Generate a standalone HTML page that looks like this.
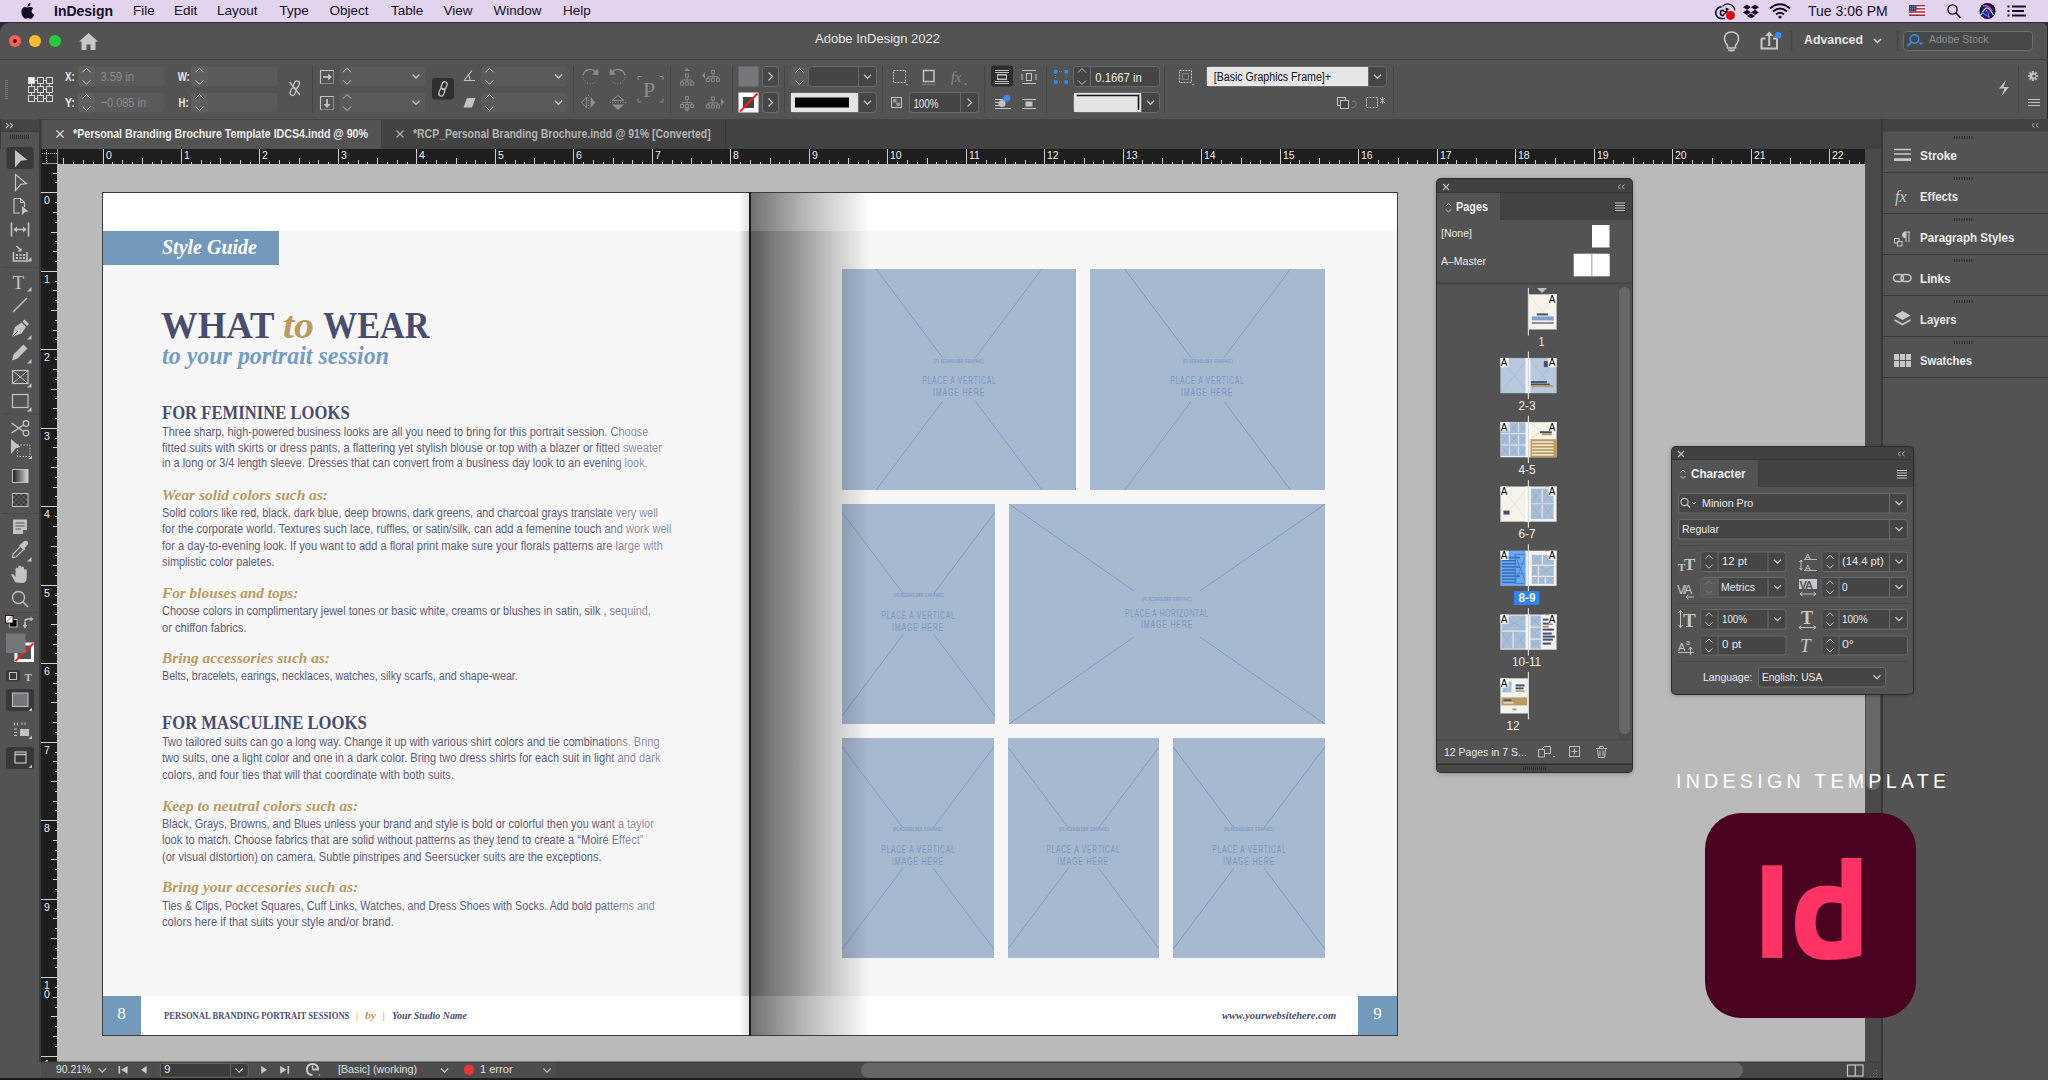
<!DOCTYPE html><html><head><meta charset="utf-8"><style>
*{margin:0;padding:0;box-sizing:border-box}
html,body{width:2048px;height:1080px;overflow:hidden;background:#bababa}
body{position:relative;font-family:"Liberation Sans",sans-serif}
div,svg{position:absolute}
.t{white-space:nowrap;line-height:1}
.ui{color:#e6e6e6;font-size:12px}
.serif{font-family:"Liberation Serif",serif}
</style></head><body><div style="left:0px;top:0px;width:2048px;height:1080px;background:#bababa"></div>
<div style="left:0px;top:0px;width:2048px;height:22px;background:#e1d4ec"></div>
<div style="left:0px;top:22px;width:2048px;height:1px;background:#3b2f4a"></div>
<svg style="left:20px;top:3px" width="14" height="16" viewBox="0 0 14 16"><path fill="#160d28" d="M11.6 8.5c0-2 1.6-2.9 1.7-3-0.9-1.4-2.3-1.5-2.8-1.6-1.2-0.1-2.3 0.7-2.9 0.7-0.6 0-1.5-0.7-2.5-0.7C3.8 4 2.6 4.7 2 5.9 0.6 8.3 1.6 11.8 3 13.8c0.7 1 1.5 2.1 2.5 2 1-0.04 1.4-0.6 2.6-0.6 1.2 0 1.5 0.6 2.6 0.6 1.1 0 1.8-1 2.4-2 0.8-1.1 1.1-2.2 1.1-2.3-0.03 0-2.6-1-2.6-3zM9.7 2.6c0.5-0.7 0.9-1.6 0.8-2.5-0.8 0-1.7 0.5-2.3 1.2-0.5 0.6-0.9 1.5-0.8 2.4 0.9 0.1 1.7-0.4 2.300-1.1z"/></svg>
<div class="t" style="left:54px;top:4px;color:#160d28;font-size:13.5px;font-weight:bold;font-size:14px">InDesign</div>
<div class="t" style="left:133px;top:4px;color:#160d28;font-size:13.5px;">File</div>
<div class="t" style="left:174px;top:4px;color:#160d28;font-size:13.5px;">Edit</div>
<div class="t" style="left:217px;top:4px;color:#160d28;font-size:13.5px;">Layout</div>
<div class="t" style="left:279.5px;top:4px;color:#160d28;font-size:13.5px;">Type</div>
<div class="t" style="left:329.5px;top:4px;color:#160d28;font-size:13.5px;">Object</div>
<div class="t" style="left:391px;top:4px;color:#160d28;font-size:13.5px;">Table</div>
<div class="t" style="left:443.5px;top:4px;color:#160d28;font-size:13.5px;">View</div>
<div class="t" style="left:493.5px;top:4px;color:#160d28;font-size:13.5px;">Window</div>
<div class="t" style="left:563px;top:4px;color:#160d28;font-size:13.5px;">Help</div>
<div class="t" style="left:1808px;top:4px;color:#160d28;font-size:13.5px;font-size:14px">Tue 3:06 PM</div>
<div style="left:0px;top:22px;width:2048px;height:14px;background:#2f2640"></div>
<div style="left:0px;top:23px;width:2047px;height:1057px;background:#535353;border-radius:9px 5px 0 0"></div>
<div style="left:2047px;top:30px;width:1px;height:1050px;background:#2a2a2a"></div>
<div style="left:0px;top:59px;width:2048px;height:1px;background:#3d3d3d"></div>
<div style="left:57px;top:164px;width:1808px;height:898px;background:#bababa"></div>
<div style="left:9px;top:35px;width:12px;height:12px;background:#fe5f57;border-radius:50%"></div>
<div style="left:29px;top:35px;width:12px;height:12px;background:#febc2e;border-radius:50%"></div>
<div style="left:49px;top:35px;width:12px;height:12px;background:#28c840;border-radius:50%"></div>
<div style="left:13px;top:39px;width:4px;height:4px;background:#4d0000;border-radius:50%"></div>
<svg style="left:79px;top:33px" width="19" height="17" viewBox="0 0 19 17"><path fill="#c8c8c8" d="M9.5 0L0 8.5h2.5V17h5v-5.5h4V17h5V8.5H19z"/></svg>
<div class="t" style="left:815px;top:32px;color:#e8e8e8;font-size:13px">Adobe InDesign 2022</div>
<div style="left:0px;top:119px;width:41px;height:12px;background:#424242"></div>
<div style="left:41px;top:119px;width:1840px;height:30px;background:#424242"></div>
<div style="left:42px;top:120px;width:339px;height:28.5px;background:#535353"></div>
<div style="left:724.5px;top:120px;width:1px;height:29px;background:#393939"></div>
<svg style="left:54px;top:128px" width="12" height="12"><path d="M2.5 2.5L9.5 9.5M9.5 2.5L2.5 9.5" stroke="#e0e0e0" stroke-width="1.3"/></svg>
<div class="t" style="left:73.00px;top:127.56px;font-family:'Liberation Sans',sans-serif;font-size:12.8px;color:#ececec;font-weight:bold;transform:scaleX(0.8308);transform-origin:left top;">*Personal Branding Brochure Template IDCS4.indd @ 90%</div>
<svg style="left:394px;top:128px" width="12" height="12"><path d="M2.5 2.5L9.5 9.5M9.5 2.5L2.5 9.5" stroke="#b0b0b0" stroke-width="1.3"/></svg>
<div class="t" style="left:413.20px;top:127.56px;font-family:'Liberation Sans',sans-serif;font-size:12.8px;color:#b4b4b4;font-weight:bold;transform:scaleX(0.8169);transform-origin:left top;">*RCP_Personal Branding Brochure.indd @ 91% [Converted]</div>
<svg style="left:1700px;top:22px" width="348" height="38"><path d="M31.5 26V17.5Q25 13.5 25 6.5Q25 -1 31.5 -1" transform="translate(0,10)" fill="none"/><path d="M27.5 23.5Q24.5 19.5 24.5 17Q24.5 10 31.5 10Q38.5 10 38.5 17Q38.5 19.5 35.5 23.5V26H27.5Z" fill="none" stroke="#c8c8c8" stroke-width="1.5"/><path d="M28 27.5H35V28.5Q34.5 29.5 31.5 29.5Q28.5 29.5 28 28.5Z" fill="#c8c8c8"/><path d="M61.5 16.5V26.5H77V16.5M65.5 16.5H61.5M77 16.5H73" fill="none" stroke="#c8c8c8" stroke-width="2"/><path d="M69.2 24V11" stroke="#c8c8c8" stroke-width="2"/><path d="M65 14L69.2 9.5L73.4 14Z" fill="#c8c8c8"/><circle cx="78.2" cy="13.3" r="3.3" fill="#3b8cf0"/><path d="M91.5 9V29" stroke="#444" stroke-width="1.5"/><path d="M174 17L177.5 20.5L181 17" fill="none" stroke="#d8d8d8" stroke-width="1.5"/><path d="M197.5 9V29" stroke="#444" stroke-width="1.5"/><rect x="203.5" y="9.5" width="129" height="19" rx="3" fill="#474747" stroke="#6e6e6e" stroke-width="1"/><circle cx="214.5" cy="17" r="4.3" fill="none" stroke="#3b8cf0" stroke-width="1.5"/><path d="M211.5 20L207.5 24" stroke="#3b8cf0" stroke-width="1.8"/><path d="M218.5 20.5H223.5L221 23Z" fill="#3b8cf0"/></svg>
<div class="t" style="left:1804.00px;top:33.47px;font-family:'Liberation Sans',sans-serif;font-size:13.5px;color:#e6e6e6;font-weight:bold;transform:scaleX(0.9144);transform-origin:left top;">Advanced</div>
<div class="t" style="left:1929.40px;top:34.36px;font-family:'Liberation Sans',sans-serif;font-size:11.5px;color:#8d8d8d;transform:scaleX(0.9124);transform-origin:left top;">Adobe Stock</div>
<svg style="left:1710px;top:0px" width="338" height="22"><path d="M15 18.5H11.5A5.8 5.8 0 0 1 11.5 6.9" fill="none" stroke="#160d28" stroke-width="1.7"/><path d="M17.5 10.5L13 15.5A2.6 2.6 0 1 1 13 10.3L15.5 12.5" fill="none" stroke="#160d28" stroke-width="1.6"/><path d="M12.5 6.5A7 7 0 0 1 24.8 10.5" fill="none" stroke="#160d28" stroke-width="1.2"/><path d="M15.5 7.5L19.5 9L16 11Z" fill="#160d28"/><circle cx="20.5" cy="15.4" r="4.5" fill="#d01010"/><path d="M37 4.5L33 7.2L37 9.8L41 7.2ZM45 4.5L41 7.2L45 9.8L49 7.2ZM33 12.4L37 15L41 12.4L37 9.8ZM45 9.8L41 12.4L45 15L49 12.4ZM37 16L41 18.6L45 16L41 13.4Z" fill="#160d28"/><path d="M60 8.5Q70 0 80 8.5" fill="none" stroke="#160d28" stroke-width="1.8"/><path d="M63 11.5Q70 5.5 77 11.5" fill="none" stroke="#160d28" stroke-width="1.8"/><path d="M66 14.5Q70 11 74 14.5" fill="none" stroke="#160d28" stroke-width="1.8"/><circle cx="70" cy="17" r="1.6" fill="#160d28"/><rect x="199" y="5.00" width="16" height="1.57" fill="#b22234"/><rect x="199" y="6.57" width="16" height="1.57" fill="#ffffff"/><rect x="199" y="8.14" width="16" height="1.57" fill="#b22234"/><rect x="199" y="9.71" width="16" height="1.57" fill="#ffffff"/><rect x="199" y="11.29" width="16" height="1.57" fill="#b22234"/><rect x="199" y="12.86" width="16" height="1.57" fill="#ffffff"/><rect x="199" y="14.43" width="16" height="1.57" fill="#b22234"/><rect x="199" y="5" width="7.5" height="6.3" fill="#3c3b6e"/><circle cx="200.5" cy="6.3" r="0.45" fill="#fff"/><circle cx="200.5" cy="8.2" r="0.45" fill="#fff"/><circle cx="200.5" cy="10.1" r="0.45" fill="#fff"/><circle cx="202.7" cy="6.3" r="0.45" fill="#fff"/><circle cx="202.7" cy="8.2" r="0.45" fill="#fff"/><circle cx="202.7" cy="10.1" r="0.45" fill="#fff"/><circle cx="204.9" cy="6.3" r="0.45" fill="#fff"/><circle cx="204.9" cy="8.2" r="0.45" fill="#fff"/><circle cx="204.9" cy="10.1" r="0.45" fill="#fff"/><circle cx="242.5" cy="9.5" r="4.6" fill="none" stroke="#160d28" stroke-width="1.4"/><path d="M245.8 12.8L250.5 17.8" stroke="#160d28" stroke-width="1.6"/><defs><radialGradient id="siri" cx="0.5" cy="0.5" r="0.5"><stop offset="0" stop-color="#3a2f7a"/><stop offset="0.8" stop-color="#1f1750"/><stop offset="1" stop-color="#140d30"/></radialGradient></defs><circle cx="277.5" cy="11" r="8" fill="url(#siri)"/><path d="M271 15Q275 7 277.5 8Q280 9 283.5 15" fill="none" stroke="#8fe8f0" stroke-width="1.3"/><path d="M273 6Q279 5 282 11" fill="none" stroke="#e040c8" stroke-width="1.5"/><path d="M272 12Q276 16 280 17" fill="none" stroke="#3a7af0" stroke-width="1.5"/><path d="M276 10Q279 13 279 18" fill="none" stroke="#c050e0" stroke-width="1"/><path d="M302 6.5H316M302 11H314M302 15.5H316" stroke="#160d28" stroke-width="1.8"/><rect x="297.5" y="5.5" width="2" height="2" fill="#160d28"/><rect x="297.5" y="10" width="2" height="2" fill="#160d28"/><rect x="297.5" y="14.5" width="2" height="2" fill="#160d28"/></svg>
<svg style="left:41px;top:149px" width="1824" height="15"><rect width="1824" height="15" fill="#1e1e1e"/><path d="M22.5 9V15M32.5 13V15M42.5 11V15M52.5 13V15M62.5 0V15M71.5 13V15M81.5 11V15M91.5 13V15M101.5 9V15M111.5 13V15M120.5 11V15M130.5 13V15M140.5 0V15M150.5 13V15M160.5 11V15M169.5 13V15M179.5 9V15M189.5 13V15M199.5 11V15M209.5 13V15M218.5 0V15M228.5 13V15M238.5 11V15M248.5 13V15M258.5 9V15M268.5 13V15M277.5 11V15M287.5 13V15M297.5 0V15M307.5 13V15M317.5 11V15M326.5 13V15M336.5 9V15M346.5 13V15M356.5 11V15M366.5 13V15M375.5 0V15M385.5 13V15M395.5 11V15M405.5 13V15M415.5 9V15M425.5 13V15M434.5 11V15M444.5 13V15M454.5 0V15M464.5 13V15M474.5 11V15M483.5 13V15M493.5 9V15M503.5 13V15M513.5 11V15M523.5 13V15M532.5 0V15M542.5 13V15M552.5 11V15M562.5 13V15M572.5 9V15M581.5 13V15M591.5 11V15M601.5 13V15M611.5 0V15M621.5 13V15M631.5 11V15M640.5 13V15M650.5 9V15M660.5 13V15M670.5 11V15M680.5 13V15M689.5 0V15M699.5 13V15M709.5 11V15M719.5 13V15M729.5 9V15M738.5 13V15M748.5 11V15M758.5 13V15M768.5 0V15M778.5 13V15M788.5 11V15M797.5 13V15M807.5 9V15M817.5 13V15M827.5 11V15M837.5 13V15M846.5 0V15M856.5 13V15M866.5 11V15M876.5 13V15M886.5 9V15M895.5 13V15M905.5 11V15M915.5 13V15M925.5 0V15M935.5 13V15M945.5 11V15M954.5 13V15M964.5 9V15M974.5 13V15M984.5 11V15M994.5 13V15M1003.5 0V15M1013.5 13V15M1023.5 11V15M1033.5 13V15M1043.5 9V15M1052.5 13V15M1062.5 11V15M1072.5 13V15M1082.5 0V15M1092.5 13V15M1101.5 11V15M1111.5 13V15M1121.5 9V15M1131.5 13V15M1141.5 11V15M1151.5 13V15M1160.5 0V15M1170.5 13V15M1180.5 11V15M1190.5 13V15M1200.5 9V15M1209.5 13V15M1219.5 11V15M1229.5 13V15M1239.5 0V15M1249.5 13V15M1258.5 11V15M1268.5 13V15M1278.5 9V15M1288.5 13V15M1298.5 11V15M1308.5 13V15M1317.5 0V15M1327.5 13V15M1337.5 11V15M1347.5 13V15M1357.5 9V15M1366.5 13V15M1376.5 11V15M1386.5 13V15M1396.5 0V15M1406.5 13V15M1415.5 11V15M1425.5 13V15M1435.5 9V15M1445.5 13V15M1455.5 11V15M1465.5 13V15M1474.5 0V15M1484.5 13V15M1494.5 11V15M1504.5 13V15M1514.5 9V15M1523.5 13V15M1533.5 11V15M1543.5 13V15M1553.5 0V15M1563.5 13V15M1572.5 11V15M1582.5 13V15M1592.5 9V15M1602.5 13V15M1612.5 11V15M1621.5 13V15M1631.5 0V15M1641.5 13V15M1651.5 11V15M1661.5 13V15M1671.5 9V15M1680.5 13V15M1690.5 11V15M1700.5 13V15M1710.5 0V15M1720.5 13V15M1729.5 11V15M1739.5 13V15M1749.5 9V15M1759.5 13V15M1769.5 11V15M1778.5 13V15M1788.5 0V15M1798.5 13V15M1808.5 11V15M1818.5 13V15" stroke="#cfcfcf" stroke-width="1"/><g fill="#ececec" font-family="Liberation Sans" font-size="10.5"><text x="65.0" y="10" >0</text><text x="143.0" y="10" >1</text><text x="221.0" y="10" >2</text><text x="300.0" y="10" >3</text><text x="378.0" y="10" >4</text><text x="457.0" y="10" >5</text><text x="535.0" y="10" >6</text><text x="614.0" y="10" >7</text><text x="692.0" y="10" >8</text><text x="771.0" y="10" >9</text><text x="849.0" y="10" >10</text><text x="928.0" y="10" >11</text><text x="1006.0" y="10" >12</text><text x="1085.0" y="10" >13</text><text x="1163.0" y="10" >14</text><text x="1242.0" y="10" >15</text><text x="1320.0" y="10" >16</text><text x="1399.0" y="10" >17</text><text x="1477.0" y="10" >18</text><text x="1556.0" y="10" >19</text><text x="1634.0" y="10" >20</text><text x="1713.0" y="10" >21</text><text x="1791.0" y="10" >22</text></g><path d="M5.5 1V15M1 4.5H16" stroke="#bdbdbd" stroke-dasharray="1 1"/><path d="M16.5 0V15M1 14.5H16" stroke="#9a9a9a" stroke-width="1"/></svg>
<svg style="left:41px;top:164px" width="16" height="898"><rect width="16" height="898" fill="#1e1e1e"/><path d="M12 9.5H16M14 18.5H16M0 28.5H16M14 38.5H16M12 48.5H16M14 58.5H16M10 68.5H16M14 77.5H16M12 87.5H16M14 97.5H16M0 107.5H16M14 117.5H16M12 126.5H16M14 136.5H16M10 146.5H16M14 156.5H16M12 166.5H16M14 175.5H16M0 185.5H16M14 195.5H16M12 205.5H16M14 215.5H16M10 225.5H16M14 234.5H16M12 244.5H16M14 254.5H16M0 264.5H16M14 274.5H16M12 283.5H16M14 293.5H16M10 303.5H16M14 313.5H16M12 323.5H16M14 332.5H16M0 342.5H16M14 352.5H16M12 362.5H16M14 372.5H16M10 382.5H16M14 391.5H16M12 401.5H16M14 411.5H16M0 421.5H16M14 431.5H16M12 440.5H16M14 450.5H16M10 460.5H16M14 470.5H16M12 480.5H16M14 489.5H16M0 499.5H16M14 509.5H16M12 519.5H16M14 529.5H16M10 538.5H16M14 548.5H16M12 558.5H16M14 568.5H16M0 578.5H16M14 588.5H16M12 597.5H16M14 607.5H16M10 617.5H16M14 627.5H16M12 637.5H16M14 646.5H16M0 656.5H16M14 666.5H16M12 676.5H16M14 686.5H16M10 695.5H16M14 705.5H16M12 715.5H16M14 725.5H16M0 735.5H16M14 745.5H16M12 754.5H16M14 764.5H16M10 774.5H16M14 784.5H16M12 794.5H16M14 803.5H16M0 813.5H16M14 823.5H16M12 833.5H16M14 843.5H16M10 852.5H16M14 862.5H16M12 872.5H16M14 882.5H16M0 892.5H16" stroke="#cfcfcf" stroke-width="1"/><g fill="#ececec" font-family="Liberation Sans" font-size="10.5"><text x="3" y="39.5">0</text><text x="3" y="118.5">1</text><text x="3" y="196.5">2</text><text x="3" y="275.5">3</text><text x="3" y="353.5">4</text><text x="3" y="432.5">5</text><text x="3" y="510.5">6</text><text x="3" y="589.5">7</text><text x="3" y="667.5">8</text><text x="3" y="746.5">9</text><text x="3" y="824.5">1</text><text x="3" y="833.5">0</text><text x="3" y="903.5">1</text><text x="3" y="912.5">1</text></g></svg>
<div style="left:0px;top:119px;width:39px;height:943px;background:#535353"></div>
<div style="left:39px;top:119px;width:2px;height:943px;background:#3a3a3a"></div>
<svg style="left:0;top:0" width="40" height="1080"><rect x="6.5" y="147" width="27" height="22" rx="3" fill="#383838"/><path d="M15 150L27.5 160L21 160.8L15 167.5Z" fill="#c3c3c3"/><path d="M15.5 174.5L26.5 183.5L20.8 184.3L15.5 190.5Z" fill="none" stroke="#c3c3c3" stroke-width="1.2"/><path d="M14 198.5H20.5L24.5 202.5V207M14 198.5V213H20" fill="none" stroke="#c3c3c3" stroke-width="1.2"/><path d="M20.5 198.5V202.5H24.5" fill="none" stroke="#c3c3c3" stroke-width="1"/><path d="M22 206L28.5 211.5L25 212L22 215Z" fill="#c3c3c3"/><path d="M11.5 222.5V236.5M28.5 222.5V236.5M14 229.5H26" stroke="#c3c3c3" stroke-width="1.6" fill="none"/><path d="M13.5 229.5L17 226.5V232.5ZM26.5 229.5L23 226.5V232.5Z" fill="#c3c3c3"/><path d="M13.5 252V261H27V252" fill="none" stroke="#c3c3c3" stroke-width="1.6"/><path d="M16.5 246L20.5 250" stroke="#c3c3c3" stroke-width="1.4"/><path d="M21.5 247.5V251.5H17.5Z" fill="#c3c3c3"/><rect x="16" y="254" width="2" height="2" fill="#c3c3c3"/><rect x="19.5" y="254" width="2" height="2" fill="#c3c3c3"/><rect x="23" y="254" width="2" height="2" fill="#c3c3c3"/><rect x="16" y="257" width="2" height="2" fill="#c3c3c3"/><rect x="19.5" y="257" width="2" height="2" fill="#c3c3c3"/><rect x="23" y="257" width="2" height="2" fill="#c3c3c3"/><path d="M29 259.5L31.5 257V261.5H27Z" fill="#c3c3c3"/><path d="M2 267.5H38M2 414H38M2 513.5H38M2 612.5H38" stroke="#4a4a4a" stroke-width="1"/><text x="12.5" y="288.5" font-family="Liberation Serif" font-size="19" fill="#c3c3c3">T</text><path d="M29 289.5L31.5 287V291.5H27Z" fill="#c3c3c3"/><path d="M13 312L27 298" stroke="#c3c3c3" stroke-width="1.5"/><path d="M12 337L15 327L21.5 322.5L26 327L21.5 333.5Z" fill="#c3c3c3"/><path d="M22.5 321.5L24.5 319.5L29 324L27 326Z" fill="#c3c3c3"/><path d="M12.5 336.5L18 331" stroke="#535353" stroke-width="1"/><path d="M29 337.5L31.5 335V339.5H27Z" fill="#c3c3c3"/><path d="M12 360.5L13.5 354.5L23.5 344.5L27.5 348.5L17.5 358.5Z" fill="#c3c3c3"/><path d="M29 361.5L31.5 359V363.5H27Z" fill="#c3c3c3"/><rect x="12.5" y="370.5" width="15.5" height="13" fill="none" stroke="#c3c3c3" stroke-width="1.2"/><path d="M12.5 370.5L28 383.5M28 370.5L12.5 383.5" stroke="#c3c3c3" stroke-width="1"/><path d="M29 385.5L31.5 383V387.5H27Z" fill="#c3c3c3"/><rect x="12.5" y="394.5" width="15.5" height="13" fill="none" stroke="#c3c3c3" stroke-width="1.2"/><path d="M29 409.5L31.5 407V411.5H27Z" fill="#c3c3c3"/><circle cx="26" cy="423.5" r="2.8" fill="none" stroke="#c3c3c3" stroke-width="1.2"/><circle cx="26" cy="433" r="2.8" fill="none" stroke="#c3c3c3" stroke-width="1.2"/><path d="M11.5 423L23.5 431.5M11.5 433L23.5 425" stroke="#c3c3c3" stroke-width="1.5"/><path d="M11 439L20.5 447L16 448L11 454Z" fill="#c3c3c3"/><rect x="17.5" y="445" width="12.5" height="11.5" fill="none" stroke="#c3c3c3" stroke-width="1" stroke-dasharray="1.5 1.5"/><path d="M30 457.5L32 455.5V459H28.5Z" fill="#c3c3c3"/><defs><linearGradient id="gr" x1="0" x2="1"><stop offset="0" stop-color="#1a1a1a"/><stop offset="1" stop-color="#dcdcdc"/></linearGradient><pattern id="ck" width="5" height="5" patternUnits="userSpaceOnUse" x="12.5" y="493.5"><rect width="5" height="5" fill="#6a6a6a"/><rect width="2.5" height="2.5" fill="#2a2a2a"/><rect x="2.5" y="2.5" width="2.5" height="2.5" fill="#2a2a2a"/></pattern></defs><rect x="12.5" y="469.5" width="15.5" height="13" fill="url(#gr)" stroke="#c3c3c3" stroke-width="1"/><rect x="12.5" y="493.5" width="15.5" height="13" fill="url(#ck)" stroke="#c3c3c3" stroke-width="1"/><path d="M13 519.5H27V529.5L22.5 534H13Z" fill="#c3c3c3"/><path d="M15.5 523H24.5M15.5 526H24.5M15.5 529H21" stroke="#535353" stroke-width="1"/><path d="M23 533.5V530H26.5Z" fill="#535353"/><path d="M12.5 557.5L13 554L21 546L24 549L16 557Z" fill="none" stroke="#c3c3c3" stroke-width="1.2"/><path d="M20 545L23.5 541.5Q26 540 27.5 541.5Q29 543 27 545.5L24.5 548L25.5 549L24 550.5L19 545.5L20.5 544Z" fill="#c3c3c3"/><path d="M29 559.5L31.5 557V561.5H27Z" fill="#c3c3c3"/><path d="M15.5 582.5L11.5 575.5Q11 573.5 13 574L15.5 577V569Q15.5 567.5 17 567.5Q18.3 567.5 18.3 569V574V567Q18.3 565.5 19.8 565.5Q21.2 565.5 21.2 567V574V568Q21.2 566.5 22.7 566.5Q24 566.5 24 568V575V570.5Q24 569 25.4 569Q26.8 569 26.8 570.5V577Q26.8 583 22 583Z" fill="#c3c3c3"/><circle cx="18.5" cy="597.5" r="6" fill="none" stroke="#c3c3c3" stroke-width="1.3"/><path d="M22.8 601.8L28 607" stroke="#c3c3c3" stroke-width="1.6"/><rect x="9.5" y="619.5" width="7.5" height="7.5" fill="#000" stroke="#ddd" stroke-width="0.8"/><rect x="5.5" y="615.5" width="7.5" height="7.5" fill="#fff" stroke="#000" stroke-width="0.8"/><path d="M6.5 622L12 616.5" stroke="#e02020" stroke-width="0.9"/><path d="M25 621.5Q25 619 28 619H31" fill="none" stroke="#c3c3c3" stroke-width="1.6"/><path d="M30.5 616.5L33.5 619L30.5 621.5Z" fill="#c3c3c3"/><path d="M25 622V625.5" stroke="#c3c3c3" stroke-width="1.6"/><path d="M22.5 625L25 628.5L27.5 625Z" fill="#c3c3c3"/><rect x="14.5" y="642.5" width="19.5" height="19.5" fill="#ffffff"/><rect x="17.5" y="645.5" width="13.5" height="13.5" fill="#535353"/><path d="M15.5 661L33.5 643.5" stroke="#ee1c25" stroke-width="1.8"/><rect x="6" y="633.5" width="19.5" height="19.5" fill="#76777b"/><rect x="6" y="670" width="14" height="11.5" rx="2" fill="#383838"/><rect x="9.5" y="672.5" width="7" height="7" fill="none" stroke="#c3c3c3" stroke-width="1"/><text x="24.5" y="680.5" font-family="Liberation Serif" font-weight="bold" font-size="11" fill="#c3c3c3">T</text><rect x="6" y="689" width="28" height="22" rx="3" fill="#383838"/><rect x="12.5" y="693" width="15.5" height="13.5" fill="#76777b" stroke="#c3c3c3" stroke-width="1"/><path d="M30 709.5L32 707.5V711H28.5Z" fill="#c3c3c3"/><rect x="20" y="729" width="9" height="7" fill="#c3c3c3"/><path d="M14.5 722.5V725.5M17.5 722.5V725.5M22 722.5V725M25 722.5V725M14 729H17M14 732.5H17M14 735.5H17" stroke="#c3c3c3" stroke-width="1"/><path d="M30 737.5L32 735.5V739H28.5Z" fill="#c3c3c3"/><rect x="6" y="747" width="28" height="22" rx="3" fill="#383838"/><rect x="15" y="752" width="11" height="11" fill="none" stroke="#c3c3c3" stroke-width="1.2"/><path d="M15 754.5H26" stroke="#c3c3c3" stroke-width="1.5"/><path d="M30 766.5L32 764.5V768H28.5Z" fill="#c3c3c3"/></svg>
<svg style="left:0;top:119px" width="41" height="30"><rect x="0" y="0" width="1" height="30" fill="#3a3a3a"/><rect x="1" y="0.5" width="38.5" height="12" fill="#444444"/><rect x="1" y="12" width="38.5" height="1" fill="#383838"/><path d="M6 4L8.5 6.5L6 9M10 4L12.5 6.5L10 9" stroke="#bbbbbb" fill="none" stroke-width="1.1"/><path d="M10 18H29.5" stroke="#2e2e2e" stroke-dasharray="1 1" stroke-width="4.2"/></svg>
<div style="left:1865px;top:149px;width:16px;height:913px;background:#4a4a4a"></div>
<div style="left:1881px;top:119px;width:2px;height:961px;background:#383838"></div>
<div style="left:1883px;top:119px;width:165px;height:961px;background:#535353"></div>
<div style="left:41px;top:1062px;width:1840px;height:18px;background:#474747"></div>
<svg style="left:0;top:0" width="2048" height="120" font-family="Liberation Sans"><path d="M5 80.5H8" stroke="#777" stroke-width="1"/><path d="M5 82.5H8" stroke="#777" stroke-width="1"/><path d="M5 84.5H8" stroke="#777" stroke-width="1"/><path d="M5 86.5H8" stroke="#777" stroke-width="1"/><path d="M5 88.5H8" stroke="#777" stroke-width="1"/><path d="M5 90.5H8" stroke="#777" stroke-width="1"/><path d="M5 92.5H8" stroke="#777" stroke-width="1"/><path d="M5 94.5H8" stroke="#777" stroke-width="1"/><path d="M5 96.5H8" stroke="#777" stroke-width="1"/><path d="M5 98.5H8" stroke="#777" stroke-width="1"/><rect x="28.5" y="77.5" width="6" height="6" fill="#ffffff" stroke="#d8d8d8" stroke-width="1"/><rect x="28.5" y="86.5" width="6" height="6" fill="none" stroke="#d8d8d8" stroke-width="1"/><rect x="28.5" y="95.5" width="6" height="6" fill="none" stroke="#d8d8d8" stroke-width="1"/><rect x="37.5" y="77.5" width="6" height="6" fill="none" stroke="#d8d8d8" stroke-width="1"/><rect x="37.5" y="86.5" width="6" height="6" fill="none" stroke="#d8d8d8" stroke-width="1"/><rect x="37.5" y="95.5" width="6" height="6" fill="none" stroke="#d8d8d8" stroke-width="1"/><rect x="46.5" y="77.5" width="6" height="6" fill="none" stroke="#d8d8d8" stroke-width="1"/><rect x="46.5" y="86.5" width="6" height="6" fill="none" stroke="#d8d8d8" stroke-width="1"/><rect x="46.5" y="95.5" width="6" height="6" fill="none" stroke="#d8d8d8" stroke-width="1"/><path d="M34.5 80.5H37.5M43.5 80.5H46.5M34.5 89.5H37.5M43.5 89.5H46.5M34.5 98.5H37.5M43.5 98.5H46.5M31.5 83.5V86.5M40.5 83.5V86.5M49.5 83.5V86.5M31.5 92.5V95.5M40.5 92.5V95.5M49.5 92.5V95.5" stroke="#d8d8d8" stroke-width="1"/><text x="65" y="80.8" font-size="12" fill="#e8e8e8" font-weight="bold" textLength="9.8" lengthAdjust="spacingAndGlyphs" >X:</text><text x="65" y="106.7" font-size="12" fill="#e8e8e8" font-weight="bold" textLength="9.8" lengthAdjust="spacingAndGlyphs" >Y:</text><text x="177.7" y="80.8" font-size="12" fill="#e8e8e8" font-weight="bold" textLength="12.1" lengthAdjust="spacingAndGlyphs" >W:</text><text x="178.6" y="106.7" font-size="12" fill="#e8e8e8" font-weight="bold" textLength="10" lengthAdjust="spacingAndGlyphs" >H:</text><rect x="78.5" y="66.5" width="86" height="19.5" rx="3" fill="#5a5a5a"/><rect x="78" y="66" width="17" height="20.5" rx="3" fill="#5f5f5f"/><path d="M82.5 72.25L86.5 68.25L90.5 72.25M82.5 80.25L86.5 84.25L90.5 80.25" fill="none" stroke="#c3c3c3" stroke-width="1"/><rect x="78.5" y="93.0" width="86" height="19.0" rx="3" fill="#5a5a5a"/><rect x="78" y="92.5" width="17" height="20.0" rx="3" fill="#5f5f5f"/><path d="M82.5 98.5L86.5 94.5L90.5 98.5M82.5 106.5L86.5 110.5L90.5 106.5" fill="none" stroke="#c3c3c3" stroke-width="1"/><rect x="191.5" y="66.5" width="86" height="19.5" rx="3" fill="#5a5a5a"/><rect x="191" y="66" width="17" height="20.5" rx="3" fill="#5f5f5f"/><path d="M195.5 72.25L199.5 68.25L203.5 72.25M195.5 80.25L199.5 84.25L203.5 80.25" fill="none" stroke="#c3c3c3" stroke-width="1"/><rect x="191.5" y="93.0" width="86" height="19.0" rx="3" fill="#5a5a5a"/><rect x="191" y="92.5" width="17" height="20.0" rx="3" fill="#5f5f5f"/><path d="M195.5 98.5L199.5 94.5L203.5 98.5M195.5 106.5L199.5 110.5L203.5 106.5" fill="none" stroke="#c3c3c3" stroke-width="1"/><text x="100.6" y="81" font-size="12.5" fill="#8c8c8c" textLength="33.4" lengthAdjust="spacingAndGlyphs" >3.59 in</text><text x="100.6" y="107" font-size="12.5" fill="#8c8c8c" textLength="45.4" lengthAdjust="spacingAndGlyphs" >&#8722;0.085 in</text><path d="M289.5 82L300 95" stroke="#c3c3c3" stroke-width="1.3"/><g transform="rotate(25 294.8 88)"><rect x="292.3" y="80.5" width="5" height="7.6" rx="2.5" fill="none" stroke="#c3c3c3" stroke-width="1.3"/><rect x="292.3" y="88.3" width="5" height="7.6" rx="2.5" fill="none" stroke="#c3c3c3" stroke-width="1.3"/></g><path d="M312.5 66V113" stroke="#444" stroke-width="1"/><rect x="320.5" y="70.5" width="13" height="13" fill="none" stroke="#c3c3c3" stroke-width="1" stroke-dasharray="1 1"/><path d="M320.5 70.5H333.5M320.5 70.5V83.5" stroke="#c3c3c3" stroke-width="1.2"/><path d="M323 77H329" stroke="#c3c3c3" stroke-width="1.8"/><path d="M328 73.5L332 77L328 80.5Z" fill="#c3c3c3"/><rect x="320.5" y="96.5" width="13" height="13" fill="none" stroke="#c3c3c3" stroke-width="1" stroke-dasharray="1 1"/><path d="M320.5 96.5H333.5M320.5 96.5V109.5" stroke="#c3c3c3" stroke-width="1.2"/><path d="M327 99V105" stroke="#c3c3c3" stroke-width="1.8"/><path d="M323.5 104L327 108L330.5 104Z" fill="#c3c3c3"/><rect x="339.5" y="66.5" width="86" height="19.5" rx="3" fill="#5a5a5a"/><path d="M343 72.25L347 68.25L351 72.25M343 80.25L347 84.25L351 80.25" fill="none" stroke="#c3c3c3" stroke-width="1"/><path d="M412.5 74.5L416 78.0L419.5 74.5" fill="none" stroke="#c3c3c3" stroke-width="1.3"/><rect x="339.5" y="93.0" width="86" height="19.0" rx="3" fill="#5a5a5a"/><path d="M343 98.5L347 94.5L351 98.5M343 106.5L347 110.5L351 106.5" fill="none" stroke="#c3c3c3" stroke-width="1"/><path d="M412.5 100.75L416 104.25L419.5 100.75" fill="none" stroke="#c3c3c3" stroke-width="1.3"/><rect x="432" y="78" width="22" height="21.5" rx="3" fill="#2f2f2f"/><g transform="rotate(20 443 88.8)"><rect x="440.5" y="81.5" width="5" height="7.8" rx="2.5" fill="none" stroke="#c3c3c3" stroke-width="1.3"/><rect x="440.5" y="88.5" width="5" height="7.8" rx="2.5" fill="none" stroke="#c3c3c3" stroke-width="1.3"/></g><path d="M464 80.5H475M464 80.5L472 70.5M470 80.5Q470 76 467.5 74.5" fill="none" stroke="#c3c3c3" stroke-width="1.1"/><path d="M463.5 107.5L467 98H475.5L472 107.5Z" fill="#c3c3c3"/><rect x="481.5" y="66.5" width="86" height="19.5" rx="3" fill="#5a5a5a"/><path d="M485.5 72.25L489.5 68.25L493.5 72.25M485.5 80.25L489.5 84.25L493.5 80.25" fill="none" stroke="#c3c3c3" stroke-width="1"/><path d="M555.0 74.5L558.5 78.0L562.0 74.5" fill="none" stroke="#c3c3c3" stroke-width="1.3"/><rect x="481.5" y="93.0" width="86" height="19.0" rx="3" fill="#5a5a5a"/><path d="M485.5 98.5L489.5 94.5L493.5 98.5M485.5 106.5L489.5 110.5L493.5 106.5" fill="none" stroke="#c3c3c3" stroke-width="1"/><path d="M555.0 100.75L558.5 104.25L562.0 100.75" fill="none" stroke="#c3c3c3" stroke-width="1.3"/><path d="M573.5 66V113" stroke="#444" stroke-width="1"/><path d="M596.5 72.5Q593 69 589 69.5Q584 70.5 583 75.5" fill="none" stroke="#8c8c8c" stroke-width="1.3"/><path d="M583 77Q583.5 82 588.5 83.5Q593.5 84.5 596.5 80.5" fill="none" stroke="#8c8c8c" stroke-width="1" stroke-dasharray="1 1.5"/><path d="M592 74.5L598.5 75L598 68.5Z" fill="#8c8c8c"/><path d="M611.5 72.5Q615 69 619 69.5Q624 70.5 625 75.5" fill="none" stroke="#8c8c8c" stroke-width="1.3"/><path d="M625 77Q624.5 82 619.5 83.5Q614.5 84.5 611.5 80.5" fill="none" stroke="#8c8c8c" stroke-width="1" stroke-dasharray="1 1.5"/><path d="M616 74.5L609.5 75L610 68.5Z" fill="#8c8c8c"/><path d="M588.5 95V110" stroke="#8c8c8c" stroke-width="1" stroke-dasharray="1 1.5"/><path d="M586.5 97L581.5 102.5L586.5 108Z" fill="none" stroke="#8c8c8c" stroke-width="1"/><path d="M590.5 97L595.5 102.5L590.5 108Z" fill="#8c8c8c"/><path d="M610 102.5H626" stroke="#8c8c8c" stroke-width="1" stroke-dasharray="1 1.5"/><path d="M612 100.5L618 95.5L624 100.5Z" fill="none" stroke="#8c8c8c" stroke-width="1"/><path d="M612 104.5L618 110L624 104.5Z" fill="#8c8c8c"/><path d="M638 80V76.5H641.5M659.5 76.5H663V80M638 98.5V102H641.5M659.5 102H663V98.5" fill="none" stroke="#8c8c8c" stroke-width="1"/><text x="643" y="97" font-size="22" fill="#8c8c8c" font-family="Liberation Serif">P</text><path d="M670.5 66V113" stroke="#444" stroke-width="1"/><rect x="685.5" y="74" width="3" height="3" fill="none" stroke="#8c8c8c" stroke-width="0.9"/><path d="M687 77V80M682 80H692M682 80V82M687 80V82M692 80V82" stroke="#8c8c8c" stroke-width="0.9" fill="none"/><rect x="680.5" y="82" width="3" height="3" fill="none" stroke="#8c8c8c" stroke-width="0.9"/><rect x="685.5" y="82" width="3" height="3" fill="none" stroke="#8c8c8c" stroke-width="0.9"/><rect x="690.5" y="82" width="3" height="3" fill="none" stroke="#8c8c8c" stroke-width="0.9"/><path d="M684 71L687 68L690 71Z" fill="#8c8c8c"/><rect x="685.5" y="96.5" width="3" height="3" fill="none" stroke="#8c8c8c" stroke-width="0.9"/><path d="M687 99.5V102.5M682 102.5H692M682 102.5V104.5M687 102.5V104.5M692 102.5V104.5" stroke="#8c8c8c" stroke-width="0.9" fill="none"/><rect x="680.5" y="104.5" width="3" height="3" fill="none" stroke="#8c8c8c" stroke-width="0.9"/><rect x="685.5" y="104.5" width="3" height="3" fill="none" stroke="#8c8c8c" stroke-width="0.9"/><rect x="690.5" y="104.5" width="3" height="3" fill="none" stroke="#8c8c8c" stroke-width="0.9"/><path d="M684 108.5L687 111.5L690 108.5Z" fill="#8c8c8c"/><rect x="711.5" y="70.5" width="3" height="3" fill="none" stroke="#8c8c8c" stroke-width="0.9"/><path d="M713 73.5V76.5M708 76.5H718M708 76.5V78.5M713 76.5V78.5M718 76.5V78.5" stroke="#8c8c8c" stroke-width="0.9" fill="none"/><rect x="706.5" y="78.5" width="3" height="3" fill="none" stroke="#8c8c8c" stroke-width="0.9"/><rect x="711.5" y="78.5" width="3" height="3" fill="none" stroke="#8c8c8c" stroke-width="0.9"/><rect x="716.5" y="78.5" width="3" height="3" fill="none" stroke="#8c8c8c" stroke-width="0.9"/><path d="M705 72L702 75.5L705 79Z" fill="#8c8c8c"/><rect x="711.5" y="97.0" width="3" height="3" fill="none" stroke="#8c8c8c" stroke-width="0.9"/><path d="M713 100.0V103.0M708 103.0H718M708 103.0V105.0M713 103.0V105.0M718 103.0V105.0" stroke="#8c8c8c" stroke-width="0.9" fill="none"/><rect x="706.5" y="105.0" width="3" height="3" fill="none" stroke="#8c8c8c" stroke-width="0.9"/><rect x="711.5" y="105.0" width="3" height="3" fill="none" stroke="#8c8c8c" stroke-width="0.9"/><rect x="716.5" y="105.0" width="3" height="3" fill="none" stroke="#8c8c8c" stroke-width="0.9"/><path d="M721 98.5L724 102.0L721 105.5Z" fill="#8c8c8c"/><path d="M732.5 66V113" stroke="#444" stroke-width="1"/><rect x="738.5" y="66.5" width="20" height="20" fill="#76777b"/><rect x="738.5" y="92.5" width="20" height="20" fill="#ffffff"/><rect x="743" y="97" width="11" height="11" fill="#444" /><path d="M740 111.5L757.5 93.5" stroke="#ee1c25" stroke-width="1.8"/><rect x="762.5" y="66.5" width="16" height="20" rx="3" fill="#474747" stroke="#6e6e6e" stroke-width="1"/><path d="M768.5 72.5L772.5 76.5L768.5 80.5" fill="none" stroke="#c3c3c3" stroke-width="1.2"/><rect x="762.5" y="92.5" width="16" height="20" rx="3" fill="#474747" stroke="#6e6e6e" stroke-width="1"/><path d="M768.5 98.5L772.5 102.5L768.5 106.5" fill="none" stroke="#c3c3c3" stroke-width="1.2"/><path d="M784.5 66V113" stroke="#444" stroke-width="1"/><rect x="790.5" y="66.5" width="18" height="20" rx="3" fill="#5b5b5b"/><path d="M795.5 72.5L799.5 68.5L803.5 72.5M795.5 80.5L799.5 84.5L803.5 80.5" fill="none" stroke="#c3c3c3" stroke-width="1"/><rect x="808.5" y="66.5" width="68" height="20" rx="3" fill="#454545" stroke="#6a6a6a" stroke-width="1"/><path d="M858.5 66.5V86.5" stroke="#6a6a6a"/><path d="M864.0 74.75L867.5 78.25L871.0 74.75" fill="none" stroke="#c3c3c3" stroke-width="1.3"/><rect x="790.5" y="92.5" width="86" height="20" rx="3" fill="#454545" stroke="#6a6a6a" stroke-width="1"/><rect x="791" y="93" width="67" height="19" fill="#e4e4e4"/><rect x="795" y="97.5" width="54" height="10" fill="#000"/><path d="M858.5 92.5V112.5" stroke="#6a6a6a"/><path d="M864.0 100.75L867.5 104.25L871.0 100.75" fill="none" stroke="#c3c3c3" stroke-width="1.3"/><path d="M882.5 66V113" stroke="#444" stroke-width="1"/><rect x="893.5" y="70.5" width="12" height="12" fill="none" stroke="#c3c3c3" stroke-width="1" stroke-dasharray="2 1"/><path d="M906 84L908 84L907 85.5Z" fill="#c3c3c3"/><rect x="923.5" y="70.5" width="10.5" height="11" fill="none" stroke="#c3c3c3" stroke-width="1.5"/><path d="M922 84.5H935.5" stroke="#777" stroke-width="1.5"/><text x="951" y="82" font-size="14" fill="#8c8c8c" font-style="italic" font-family="Liberation Serif">fx</text><path d="M964 83.5L967 83.5L965.5 85.5Z" fill="#8c8c8c"/><rect x="891.5" y="97.5" width="10" height="10" fill="none" stroke="#c3c3c3" stroke-width="1"/><rect x="893" y="99" width="3.5" height="3.5" fill="#999"/><rect x="896.5" y="102.5" width="3.5" height="3.5" fill="#999"/><rect x="909.5" y="92.5" width="69" height="20" rx="3" fill="#454545" stroke="#6a6a6a" stroke-width="1"/><path d="M960.5 92.5V112.5" stroke="#6a6a6a"/><path d="M967.5 98.5L971.5 102.5L967.5 106.5" fill="none" stroke="#c3c3c3" stroke-width="1.2"/><text x="913.4" y="107.5" font-size="12.5" fill="#e8e8e8" textLength="25.1" lengthAdjust="spacingAndGlyphs" >100%</text><path d="M984.5 66V113" stroke="#444" stroke-width="1"/><rect x="991" y="65.5" width="22" height="21" rx="3" fill="#2e2e2e"/><path d="M995 70.5H1009M995 72.5H1009M995 81.5H1009M995 83.5H1009M997 75H1007M997 79H1007" stroke="#c3c3c3" stroke-width="1"/><rect x="997.5" y="74.5" width="9" height="5" fill="none" stroke="#c3c3c3" stroke-width="1"/><path d="M1022 70.5H1036M1022 83.5H1036M1022 74V80M1036 74V80" stroke="#c3c3c3" stroke-width="1"/><rect x="1026.5" y="73.5" width="5" height="7" fill="none" stroke="#c3c3c3" stroke-width="1"/><path d="M995 99.5H1003M995 102.5H999M995 105.5H1003M995 108.5H1011" stroke="#c3c3c3" stroke-width="1"/><circle cx="1002" cy="103.5" r="3.5" fill="#c3c3c3"/><circle cx="1006.7" cy="98.2" r="3.5" fill="#3b8cf0"/><path d="M1022 99.5H1036M1022 108.5H1036" stroke="#c3c3c3" stroke-width="1.2"/><rect x="1025.5" y="101.5" width="7" height="5" fill="#c3c3c3"/><path d="M1046.5 66V113" stroke="#444" stroke-width="1"/><rect x="1054" y="70" width="3.5" height="3.5" fill="#3b8cf0"/><rect x="1064.5" y="70" width="3.5" height="3.5" fill="#3b8cf0"/><rect x="1054" y="80.3" width="3.5" height="3.5" fill="#3b8cf0"/><rect x="1064.5" y="80.3" width="3.5" height="3.5" fill="#3b8cf0"/><path d="M1059 71.5H1063M1059 82H1063M1055.5 75V79M1066 75V79" stroke="#3b8cf0" stroke-width="1" stroke-dasharray="1 1"/><rect x="1073.5" y="66.5" width="86" height="20" rx="3" fill="#454545" stroke="#6a6a6a" stroke-width="1"/><path d="M1090.5 66.5V86.5" stroke="#6a6a6a"/><path d="M1078 72.5L1082 68.5L1086 72.5M1078 80.5L1082 84.5L1086 80.5" fill="none" stroke="#c3c3c3" stroke-width="1"/><text x="1095.3" y="81.5" font-size="12.5" fill="#ececec" textLength="46.4" lengthAdjust="spacingAndGlyphs" >0.1667 in</text><rect x="1073.5" y="92.5" width="86" height="20" rx="3" fill="#454545" stroke="#6a6a6a" stroke-width="1"/><rect x="1074" y="93" width="67" height="19" fill="#e4e4e4"/><path d="M1076.5 95.5H1138.5V110" fill="none" stroke="#111" stroke-width="1.6"/><path d="M1141.5 92.5V112.5" stroke="#6a6a6a"/><path d="M1147.0 100.75L1150.5 104.25L1154.0 100.75" fill="none" stroke="#c3c3c3" stroke-width="1.3"/><path d="M1164.5 66V113" stroke="#444" stroke-width="1"/><rect x="1179.5" y="70.5" width="12" height="12" fill="none" stroke="#c3c3c3" stroke-width="1" stroke-dasharray="2 1"/><rect x="1182.5" y="73.5" width="6" height="6" fill="none" stroke="#c3c3c3" stroke-width="0.8" stroke-dasharray="1 1"/><path d="M1192 84L1194.5 84L1193.2 85.5Z" fill="#c3c3c3"/><rect x="1206.5" y="66.5" width="180" height="20" rx="3" fill="#454545" stroke="#6a6a6a" stroke-width="1"/><rect x="1207" y="67" width="161.5" height="19" fill="#e6e6e6"/><path d="M1368.5 66.5V86.5" stroke="#6a6a6a"/><path d="M1374.0 74.75L1377.5 78.25L1381.0 74.75" fill="none" stroke="#c3c3c3" stroke-width="1.3"/><text x="1213.7" y="81.3" font-size="12" fill="#111" textLength="117.3" lengthAdjust="spacingAndGlyphs" >[Basic Graphics Frame]+</text><rect x="1337.5" y="97.5" width="8" height="8" fill="none" stroke="#c3c3c3" stroke-width="1"/><rect x="1340.5" y="100.5" width="8" height="8" fill="#444" stroke="#c3c3c3" stroke-width="1"/><path d="M1352 101.5Q1356 100 1356 104Q1356 107.5 1351.5 107.5" fill="none" stroke="#888" stroke-width="1"/><rect x="1366.5" y="97.5" width="11" height="10" fill="none" stroke="#c3c3c3" stroke-width="1" stroke-dasharray="2 1"/><path d="M1380 98L1385 103M1385 98L1380 103M1382.5 97V104" stroke="#c3c3c3" stroke-width="0.9"/><path d="M1393.5 66V113" stroke="#444" stroke-width="1"/><path d="M2018.5 66V113" stroke="#444" stroke-width="1"/><path d="M2006 80L1999 88.5H2004.5L2001.5 96L2009 87H2003.5Z" fill="#c3c3c3"/><path d="M2028 99.5H2040M2028 102.5H2040M2028 105.5H2040" stroke="#c3c3c3" stroke-width="1.2"/><path d="M2038.07 74.87 L2038.07 77.13 L2036.55 76.62 L2035.95 78.07 L2037.39 78.79 L2035.79 80.39 L2035.07 78.95 L2033.62 79.55 L2034.13 81.07 L2031.87 81.07 L2032.38 79.55 L2030.93 78.95 L2030.21 80.39 L2028.61 78.79 L2030.05 78.07 L2029.45 76.62 L2027.93 77.13 L2027.93 74.87 L2029.45 75.38 L2030.05 73.93 L2028.61 73.21 L2030.21 71.61 L2030.93 73.05 L2032.38 72.45 L2031.87 70.93 L2034.13 70.93 L2033.62 72.45 L2035.07 73.05 L2035.79 71.61 L2037.39 73.21 L2035.95 73.93 L2036.55 75.38Z" fill="#c3c3c3"/><circle cx="2034" cy="76" r="1.6" fill="#535353"/></svg>
<div style="left:102px;top:192px;width:1296px;height:844px;background:#3c3c3c"></div>
<div style="left:103px;top:193px;width:1294px;height:842px;background:#ffffff"></div>
<div style="left:103px;top:231px;width:1294px;height:765px;background:#f7f7f7"></div>
<div style="left:103px;top:231px;width:176px;height:34px;background:#7399bb"></div>
<div class="t" style="left:161.50px;top:237.33px;font-family:'Liberation Serif',serif;font-size:20.5px;color:#ffffff;font-weight:bold;font-style:italic;transform:scaleX(0.9757);transform-origin:left top;">Style Guide</div>
<div class="t" style="left:161.40px;top:305.93px;font-family:'Liberation Serif',serif;font-size:38.3px;color:#4a4c70;font-weight:bold;transform:scaleX(0.9582);transform-origin:left top;">WHAT</div>
<div class="t" style="left:283.30px;top:305.93px;font-family:'Liberation Serif',serif;font-size:38.3px;color:#b99a5f;font-weight:bold;font-style:italic;transform:scaleX(1.0406);transform-origin:left top;">to</div>
<div class="t" style="left:322.50px;top:305.93px;font-family:'Liberation Serif',serif;font-size:38.3px;color:#4a4c70;font-weight:bold;transform:scaleX(0.8937);transform-origin:left top;">WEAR</div>
<div class="t" style="left:162.00px;top:343.15px;font-family:'Liberation Serif',serif;font-size:25.5px;color:#759cc2;font-weight:bold;font-style:italic;transform:scaleX(0.9396);transform-origin:left top;">to your portrait session</div>
<div class="t" style="left:161.90px;top:402.60px;font-family:'Liberation Serif',serif;font-size:19.7px;color:#4a4c70;font-weight:bold;transform:scaleX(0.8452);transform-origin:left top;">FOR FEMININE LOOKS</div>
<div class="t" style="left:161.50px;top:425.74px;font-family:'Liberation Sans',sans-serif;font-size:12px;color:#5c5c7a;transform:scaleX(0.9172);transform-origin:left top;">Three sharp, high-powered business looks are all you need to bring for this portrait session. Choose</div>
<div class="t" style="left:161.50px;top:441.54px;font-family:'Liberation Sans',sans-serif;font-size:12px;color:#5c5c7a;transform:scaleX(0.9253);transform-origin:left top;">fitted suits with skirts or dress pants, a flattering yet stylish blouse or top with a blazer or fitted sweater</div>
<div class="t" style="left:161.50px;top:457.34px;font-family:'Liberation Sans',sans-serif;font-size:12px;color:#5c5c7a;transform:scaleX(0.9113);transform-origin:left top;">in a long or 3/4 length sleeve. Dresses that can convert from a business day look to an evening look.</div>
<div class="t" style="left:161.50px;top:487.34px;font-family:'Liberation Serif',serif;font-size:15.6px;color:#b99a5f;font-weight:bold;font-style:italic;transform:scaleX(0.9889);transform-origin:left top;">Wear solid colors such as:</div>
<div class="t" style="left:161.50px;top:507.14px;font-family:'Liberation Sans',sans-serif;font-size:12px;color:#5c5c7a;transform:scaleX(0.9057);transform-origin:left top;">Solid colors like red, black, dark blue, deep browns, dark greens, and charcoal grays translate very well</div>
<div class="t" style="left:161.50px;top:523.44px;font-family:'Liberation Sans',sans-serif;font-size:12px;color:#5c5c7a;transform:scaleX(0.9221);transform-origin:left top;">for the corporate world. Textures such lace, ruffles, or satin/silk, can add a femenine touch and work well</div>
<div class="t" style="left:161.50px;top:539.74px;font-family:'Liberation Sans',sans-serif;font-size:12px;color:#5c5c7a;transform:scaleX(0.9224);transform-origin:left top;">for a day-to-evening look. If you want to add a floral print make sure your florals patterns are large with</div>
<div class="t" style="left:161.50px;top:555.64px;font-family:'Liberation Sans',sans-serif;font-size:12px;color:#5c5c7a;transform:scaleX(0.9118);transform-origin:left top;">simplistic color paletes.</div>
<div class="t" style="left:161.50px;top:585.44px;font-family:'Liberation Serif',serif;font-size:15.6px;color:#b99a5f;font-weight:bold;font-style:italic;transform:scaleX(0.9804);transform-origin:left top;">For blouses and tops:</div>
<div class="t" style="left:161.50px;top:605.04px;font-family:'Liberation Sans',sans-serif;font-size:12px;color:#5c5c7a;transform:scaleX(0.9117);transform-origin:left top;">Choose colors in complimentary jewel tones or basic white, creams or blushes in satin, silk , sequind,</div>
<div class="t" style="left:161.50px;top:621.54px;font-family:'Liberation Sans',sans-serif;font-size:12px;color:#5c5c7a;transform:scaleX(0.9270);transform-origin:left top;">or chiffon fabrics.</div>
<div class="t" style="left:161.50px;top:650.24px;font-family:'Liberation Serif',serif;font-size:15.6px;color:#b99a5f;font-weight:bold;font-style:italic;transform:scaleX(0.9864);transform-origin:left top;">Bring accessories such as:</div>
<div class="t" style="left:161.50px;top:670.44px;font-family:'Liberation Sans',sans-serif;font-size:12px;color:#5c5c7a;transform:scaleX(0.8906);transform-origin:left top;">Belts, bracelets, earings, necklaces, watches, silky scarfs, and shape-wear.</div>
<div class="t" style="left:161.90px;top:713.00px;font-family:'Liberation Serif',serif;font-size:19.7px;color:#4a4c70;font-weight:bold;transform:scaleX(0.8470);transform-origin:left top;">FOR MASCULINE LOOKS</div>
<div class="t" style="left:161.50px;top:735.94px;font-family:'Liberation Sans',sans-serif;font-size:12px;color:#5c5c7a;transform:scaleX(0.9167);transform-origin:left top;">Two tailored suits can go a long way. Change it up with various shirt colors and tie combinations. Bring</div>
<div class="t" style="left:161.50px;top:752.44px;font-family:'Liberation Sans',sans-serif;font-size:12px;color:#5c5c7a;transform:scaleX(0.9215);transform-origin:left top;">two suits, one a light color and one in a dark color. Bring two dress shirts for each suit in light and dark</div>
<div class="t" style="left:161.50px;top:768.94px;font-family:'Liberation Sans',sans-serif;font-size:12px;color:#5c5c7a;transform:scaleX(0.9314);transform-origin:left top;">colors, and four ties that will that coordinate with both suits.</div>
<div class="t" style="left:161.50px;top:798.44px;font-family:'Liberation Serif',serif;font-size:15.6px;color:#b99a5f;font-weight:bold;font-style:italic;transform:scaleX(0.9869);transform-origin:left top;">Keep to neutral colors such as:</div>
<div class="t" style="left:161.50px;top:818.04px;font-family:'Liberation Sans',sans-serif;font-size:12px;color:#5c5c7a;transform:scaleX(0.9114);transform-origin:left top;">Black, Grays, Browns, and Blues unless your brand and style is bold or colorful then you want a taylor</div>
<div class="t" style="left:161.50px;top:834.24px;font-family:'Liberation Sans',sans-serif;font-size:12px;color:#5c5c7a;transform:scaleX(0.9223);transform-origin:left top;">look to match. Choose fabrics that are solid without patterns as they tend to create a “Moiré Effect”</div>
<div class="t" style="left:161.50px;top:850.74px;font-family:'Liberation Sans',sans-serif;font-size:12px;color:#5c5c7a;transform:scaleX(0.9152);transform-origin:left top;">(or visual distortion) on camera. Subtle pinstripes and Seersucker suits are the exceptions.</div>
<div class="t" style="left:161.50px;top:879.34px;font-family:'Liberation Serif',serif;font-size:15.6px;color:#b99a5f;font-weight:bold;font-style:italic;transform:scaleX(0.9934);transform-origin:left top;">Bring your accesories such as:</div>
<div class="t" style="left:161.50px;top:899.74px;font-family:'Liberation Sans',sans-serif;font-size:12px;color:#5c5c7a;transform:scaleX(0.8952);transform-origin:left top;">Ties &amp; Clips, Pocket Squares, Cuff Links, Watches, and Dress Shoes with Socks. Add bold patterns and</div>
<div class="t" style="left:161.50px;top:916.14px;font-family:'Liberation Sans',sans-serif;font-size:12px;color:#5c5c7a;transform:scaleX(0.9292);transform-origin:left top;">colors here if that suits your style and/or brand.</div>
<div style="left:600px;top:424px;width:90px;height:510px;background:linear-gradient(90deg,rgba(247,247,247,0) 0px,rgba(247,247,247,.32) 26px,rgba(247,247,247,.34) 100%)"></div>
<div style="left:103px;top:996px;width:38px;height:39px;background:#7399bb"></div>
<div class="t" style="left:117.35px;top:1005.26px;font-family:'Liberation Serif',serif;font-size:17px;color:#ffffff;">8</div>
<div class="t" style="left:163.50px;top:1010.96px;font-family:'Liberation Serif',serif;font-size:9.6px;color:#4a4c70;font-weight:bold;transform:scaleX(0.8949);transform-origin:left top;">PERSONAL BRANDING PORTRAIT SESSIONS</div>
<div class="t" style="left:355.90px;top:1010.29px;font-family:'Liberation Serif',serif;font-size:11px;color:#b99a5f;">|</div>
<div class="t" style="left:365.00px;top:1010.63px;font-family:'Liberation Serif',serif;font-size:10px;color:#b99a5f;font-weight:bold;font-style:italic;transform:scaleX(1.1655);transform-origin:left top;">by</div>
<div class="t" style="left:382.60px;top:1010.29px;font-family:'Liberation Serif',serif;font-size:11px;color:#b99a5f;">|</div>
<div class="t" style="left:391.60px;top:1010.63px;font-family:'Liberation Serif',serif;font-size:10px;color:#4a4c70;font-weight:bold;font-style:italic;transform:scaleX(0.9924);transform-origin:left top;">Your Studio Name</div>
<div style="left:1358px;top:996px;width:39px;height:39px;background:#7399bb"></div>
<div class="t" style="left:1373.25px;top:1005.26px;font-family:'Liberation Serif',serif;font-size:17px;color:#ffffff;">9</div>
<div class="t" style="left:1226.93px;top:1010.63px;font-family:'Liberation Serif',serif;font-size:10px;color:#4a4c70;font-weight:bold;font-style:italic;transform:scaleX(1.0452);transform-origin:right top;">www.yourwebsitehere.com</div>
<svg style="left:842px;top:269px" width="234" height="221"><rect width="234" height="221" fill="#a7b9d0"/><g stroke="#7b9bc2" stroke-width="1"><line x1="34.1" y1="0.0" x2="100.4" y2="88.4"/><line x1="199.9" y1="221.0" x2="133.6" y2="132.6"/><line x1="199.9" y1="0.0" x2="133.6" y2="88.4"/><line x1="34.1" y1="221.0" x2="100.4" y2="132.6"/></g></svg>
<div class="t" style="left:924.12px;top:359.69px;font-family:'Liberation Sans',sans-serif;font-size:4.5px;color:#7898c0;font-weight:bold;letter-spacing:0.5px;transform:scaleX(0.7168);transform-origin:center top;">(PLACEHOLDER GRAPHIC)</div>
<div class="t" style="left:897.65px;top:375.49px;font-family:'Liberation Sans',sans-serif;font-size:11px;color:#7898c0;letter-spacing:1.3px;transform:scaleX(0.6031);transform-origin:center top;">PLACE A VERTICAL</div>
<div class="t" style="left:917.97px;top:387.19px;font-family:'Liberation Sans',sans-serif;font-size:11px;color:#7898c0;letter-spacing:1.3px;transform:scaleX(0.6336);transform-origin:center top;">IMAGE HERE</div>
<svg style="left:1090px;top:269px" width="235" height="221"><rect width="235" height="221" fill="#a7b9d0"/><g stroke="#7b9bc2" stroke-width="1"><line x1="34.6" y1="0.0" x2="100.9" y2="88.4"/><line x1="200.4" y1="221.0" x2="134.1" y2="132.6"/><line x1="200.4" y1="0.0" x2="134.1" y2="88.4"/><line x1="34.6" y1="221.0" x2="100.9" y2="132.6"/></g></svg>
<div class="t" style="left:1172.62px;top:359.69px;font-family:'Liberation Sans',sans-serif;font-size:4.5px;color:#7898c0;font-weight:bold;letter-spacing:0.5px;transform:scaleX(0.7168);transform-origin:center top;">(PLACEHOLDER GRAPHIC)</div>
<div class="t" style="left:1146.15px;top:375.49px;font-family:'Liberation Sans',sans-serif;font-size:11px;color:#7898c0;letter-spacing:1.3px;transform:scaleX(0.6031);transform-origin:center top;">PLACE A VERTICAL</div>
<div class="t" style="left:1166.47px;top:387.19px;font-family:'Liberation Sans',sans-serif;font-size:11px;color:#7898c0;letter-spacing:1.3px;transform:scaleX(0.6336);transform-origin:center top;">IMAGE HERE</div>
<svg style="left:842px;top:504px" width="153" height="220"><rect width="153" height="220" fill="#a7b9d0"/><g stroke="#7b9bc2" stroke-width="1"><line x1="0.0" y1="8.0" x2="61.2" y2="89.6"/><line x1="153.0" y1="212.0" x2="91.8" y2="130.4"/><line x1="153.0" y1="8.0" x2="91.8" y2="89.6"/><line x1="0.0" y1="212.0" x2="61.2" y2="130.4"/></g></svg>
<div class="t" style="left:883.62px;top:594.19px;font-family:'Liberation Sans',sans-serif;font-size:4.5px;color:#7898c0;font-weight:bold;letter-spacing:0.5px;transform:scaleX(0.7168);transform-origin:center top;">(PLACEHOLDER GRAPHIC)</div>
<div class="t" style="left:857.15px;top:609.99px;font-family:'Liberation Sans',sans-serif;font-size:11px;color:#7898c0;letter-spacing:1.3px;transform:scaleX(0.6031);transform-origin:center top;">PLACE A VERTICAL</div>
<div class="t" style="left:877.47px;top:621.69px;font-family:'Liberation Sans',sans-serif;font-size:11px;color:#7898c0;letter-spacing:1.3px;transform:scaleX(0.6336);transform-origin:center top;">IMAGE HERE</div>
<svg style="left:1009px;top:504px" width="316" height="220"><rect width="316" height="220" fill="#a7b9d0"/><g stroke="#7b9bc2" stroke-width="1"><line x1="0.0" y1="0.0" x2="124.8" y2="86.9"/><line x1="316.0" y1="220.0" x2="191.2" y2="133.1"/><line x1="316.0" y1="0.0" x2="191.2" y2="86.9"/><line x1="0.0" y1="220.0" x2="124.8" y2="133.1"/></g></svg>
<div class="t" style="left:1132.12px;top:598.19px;font-family:'Liberation Sans',sans-serif;font-size:4.5px;color:#7898c0;font-weight:bold;letter-spacing:0.5px;transform:scaleX(0.7168);transform-origin:center top;">(PLACEHOLDER GRAPHIC)</div>
<div class="t" style="left:1096.11px;top:608.19px;font-family:'Liberation Sans',sans-serif;font-size:11px;color:#7898c0;letter-spacing:1.3px;transform:scaleX(0.5924);transform-origin:center top;">PLACE A HORIZONTAL</div>
<div class="t" style="left:1125.97px;top:618.69px;font-family:'Liberation Sans',sans-serif;font-size:11px;color:#7898c0;letter-spacing:1.3px;transform:scaleX(0.6336);transform-origin:center top;">IMAGE HERE</div>
<svg style="left:842px;top:738px" width="152" height="220"><rect width="152" height="220" fill="#a7b9d0"/><g stroke="#7b9bc2" stroke-width="1"><line x1="0.0" y1="8.7" x2="60.8" y2="89.7"/><line x1="152.0" y1="211.3" x2="91.2" y2="130.3"/><line x1="152.0" y1="8.7" x2="91.2" y2="89.7"/><line x1="0.0" y1="211.3" x2="60.8" y2="130.3"/></g></svg>
<div class="t" style="left:883.12px;top:828.19px;font-family:'Liberation Sans',sans-serif;font-size:4.5px;color:#7898c0;font-weight:bold;letter-spacing:0.5px;transform:scaleX(0.7168);transform-origin:center top;">(PLACEHOLDER GRAPHIC)</div>
<div class="t" style="left:856.65px;top:843.99px;font-family:'Liberation Sans',sans-serif;font-size:11px;color:#7898c0;letter-spacing:1.3px;transform:scaleX(0.6031);transform-origin:center top;">PLACE A VERTICAL</div>
<div class="t" style="left:876.97px;top:855.69px;font-family:'Liberation Sans',sans-serif;font-size:11px;color:#7898c0;letter-spacing:1.3px;transform:scaleX(0.6336);transform-origin:center top;">IMAGE HERE</div>
<svg style="left:1008px;top:738px" width="151" height="220"><rect width="151" height="220" fill="#a7b9d0"/><g stroke="#7b9bc2" stroke-width="1"><line x1="0.0" y1="9.3" x2="60.4" y2="89.9"/><line x1="151.0" y1="210.7" x2="90.6" y2="130.1"/><line x1="151.0" y1="9.3" x2="90.6" y2="89.9"/><line x1="0.0" y1="210.7" x2="60.4" y2="130.1"/></g></svg>
<div class="t" style="left:1048.62px;top:828.19px;font-family:'Liberation Sans',sans-serif;font-size:4.5px;color:#7898c0;font-weight:bold;letter-spacing:0.5px;transform:scaleX(0.7168);transform-origin:center top;">(PLACEHOLDER GRAPHIC)</div>
<div class="t" style="left:1022.15px;top:843.99px;font-family:'Liberation Sans',sans-serif;font-size:11px;color:#7898c0;letter-spacing:1.3px;transform:scaleX(0.6031);transform-origin:center top;">PLACE A VERTICAL</div>
<div class="t" style="left:1042.47px;top:855.69px;font-family:'Liberation Sans',sans-serif;font-size:11px;color:#7898c0;letter-spacing:1.3px;transform:scaleX(0.6336);transform-origin:center top;">IMAGE HERE</div>
<svg style="left:1173px;top:738px" width="152" height="220"><rect width="152" height="220" fill="#a7b9d0"/><g stroke="#7b9bc2" stroke-width="1"><line x1="0.0" y1="8.7" x2="60.8" y2="89.7"/><line x1="152.0" y1="211.3" x2="91.2" y2="130.3"/><line x1="152.0" y1="8.7" x2="91.2" y2="89.7"/><line x1="0.0" y1="211.3" x2="60.8" y2="130.3"/></g></svg>
<div class="t" style="left:1214.12px;top:828.19px;font-family:'Liberation Sans',sans-serif;font-size:4.5px;color:#7898c0;font-weight:bold;letter-spacing:0.5px;transform:scaleX(0.7168);transform-origin:center top;">(PLACEHOLDER GRAPHIC)</div>
<div class="t" style="left:1187.65px;top:843.99px;font-family:'Liberation Sans',sans-serif;font-size:11px;color:#7898c0;letter-spacing:1.3px;transform:scaleX(0.6031);transform-origin:center top;">PLACE A VERTICAL</div>
<div class="t" style="left:1207.97px;top:855.69px;font-family:'Liberation Sans',sans-serif;font-size:11px;color:#7898c0;letter-spacing:1.3px;transform:scaleX(0.6336);transform-origin:center top;">IMAGE HERE</div>
<div style="left:750px;top:193px;width:120px;height:38px;background:linear-gradient(90deg,rgba(0,0,0,.565) 0%,rgba(0,0,0,.45) 18%,rgba(0,0,0,.34) 36%,rgba(0,0,0,.243) 53%,rgba(0,0,0,.157) 70%,rgba(0,0,0,.075) 87%,rgba(0,0,0,0) 100%)"></div>
<div style="left:750px;top:231px;width:120px;height:765px;background:linear-gradient(90deg,rgba(6,3,3,.66) 0%,rgba(6,3,3,.52) 18%,rgba(6,3,3,.425) 36%,rgba(6,3,3,.30) 53%,rgba(6,3,3,.19) 70%,rgba(6,3,3,.085) 87%,rgba(6,3,3,0) 100%)"></div>
<div style="left:750px;top:996px;width:120px;height:39px;background:linear-gradient(90deg,rgba(0,0,0,.565) 0%,rgba(0,0,0,.45) 18%,rgba(0,0,0,.34) 36%,rgba(0,0,0,.243) 53%,rgba(0,0,0,.157) 70%,rgba(0,0,0,.075) 87%,rgba(0,0,0,0) 100%)"></div>
<div style="left:739px;top:193px;width:10px;height:38px;background:linear-gradient(90deg,rgba(0,0,0,0),rgba(0,0,0,.12))"></div>
<div style="left:739px;top:231px;width:10px;height:765px;background:linear-gradient(90deg,rgba(20,10,5,0),rgba(20,10,5,.27))"></div>
<div style="left:739px;top:996px;width:10px;height:39px;background:linear-gradient(90deg,rgba(0,0,0,0),rgba(0,0,0,.12))"></div>
<div style="left:748.5px;top:192px;width:2px;height:844px;background:#1a1a1a"></div>
<svg style="left:0;top:0" width="2048" height="1080" font-family="Liberation Sans"><rect x="41" y="1062" width="515" height="16" fill="#4d4d4d"/><rect x="556" y="1062" width="1309" height="16" fill="#474747"/><rect x="861" y="1062.5" width="882" height="15.5" rx="7.75" fill="#666666"/><rect x="1865" y="1062" width="15" height="16" fill="#474747"/><rect x="41" y="1061.5" width="1839" height="1" fill="#3c3c3c"/><rect x="0" y="1078" width="2048" height="2" fill="#1b1b1b"/><path d="M98.6 1068.5L102.3 1072.2L106 1068.5" fill="none" stroke="#c8c8c8" stroke-width="1.1"/><rect x="118.5" y="1066" width="1.6" height="7.7" fill="#c8c8c8"/><path d="M127.6 1066V1073.7L121 1069.85Z" fill="#c8c8c8"/><path d="M146.6 1066V1073.7L141 1069.85Z" fill="#c8c8c8"/><rect x="160.3" y="1063.3" width="88" height="14" rx="2.5" fill="#3c3c3c" stroke="#666" stroke-width="1"/><path d="M230.5 1063V1077" stroke="#666"/><path d="M235.5 1068.5L239.2 1072.2L242.9 1068.5" fill="none" stroke="#c8c8c8" stroke-width="1.1"/><path d="M261.2 1066V1073.7L267 1069.85Z" fill="#c8c8c8"/><path d="M280.2 1066V1073.7L286.5 1069.85Z" fill="#c8c8c8"/><rect x="287.5" y="1066" width="1.6" height="7.7" fill="#c8c8c8"/><path d="M312.5 1069.5H318Q318 1064 312.5 1064Q307 1064 307 1069.5Q307 1075 312.5 1075" fill="none" stroke="#c8c8c8" stroke-width="2"/><path d="M312.5 1065.5V1069.5" stroke="#c8c8c8" stroke-width="1.3"/><path d="M318.5 1074.5L320.5 1074.5L319.5 1076Z" fill="#c8c8c8"/><path d="M441 1068.5L444.6 1072.2L448.2 1068.5" fill="none" stroke="#c8c8c8" stroke-width="1.1"/><circle cx="469" cy="1069.8" r="5.2" fill="#e8343a"/><path d="M543.4 1068.5L547 1072.2L550.7 1068.5" fill="none" stroke="#c8c8c8" stroke-width="1.1"/><rect x="1847.5" y="1065" width="15.5" height="11" fill="none" stroke="#c8c8c8" stroke-width="1.2"/><path d="M1855.25 1065V1076" stroke="#c8c8c8" stroke-width="1.2"/><path d="M1870 1076.5H1871M1873 1076.5H1874M1876 1076.5H1877M1873 1073.5H1874M1876 1073.5H1877M1876 1070.5H1877" stroke="#777" stroke-width="1"/><rect x="1866" y="460" width="14" height="330" rx="7" fill="#686868"/></svg>
<div class="t" style="left:56.10px;top:1063.92px;font-family:'Liberation Sans',sans-serif;font-size:11.2px;color:#e0e0e0;transform:scaleX(0.9266);transform-origin:left top;">90.21%</div>
<div class="t" style="left:163.50px;top:1064.12px;font-family:'Liberation Sans',sans-serif;font-size:11.2px;color:#e8e8e8;transform:scaleX(1.0435);transform-origin:left top;">9</div>
<div class="t" style="left:338.30px;top:1063.92px;font-family:'Liberation Sans',sans-serif;font-size:11.2px;color:#e0e0e0;transform:scaleX(0.9556);transform-origin:left top;">[Basic] (working)</div>
<div class="t" style="left:480.40px;top:1063.92px;font-family:'Liberation Sans',sans-serif;font-size:11.2px;color:#e0e0e0;transform:scaleX(0.9882);transform-origin:left top;">1 error</div>
<svg style="left:0;top:0" width="2048" height="1080" font-family="Liberation Sans"><rect x="1883" y="119" width="165" height="12.5" fill="#424242"/><path d="M2034.5 123L2032 125.3L2034.5 127.6M2038.5 123L2036 125.3L2038.5 127.6" fill="none" stroke="#b0b0b0" stroke-width="1"/><rect x="1883" y="132" width="165" height="40" fill="#535353"/><rect x="1883" y="172" width="165" height="1" fill="#3a3a3a"/><path d="M1954 137.5H1974" stroke="#2a2a2a" stroke-width="3" stroke-dasharray="1 1.5"/><rect x="1883" y="173" width="165" height="40" fill="#535353"/><rect x="1883" y="213" width="165" height="1" fill="#3a3a3a"/><path d="M1954 178.5H1974" stroke="#2a2a2a" stroke-width="3" stroke-dasharray="1 1.5"/><rect x="1883" y="214" width="165" height="40" fill="#535353"/><rect x="1883" y="254" width="165" height="1" fill="#3a3a3a"/><path d="M1954 219.5H1974" stroke="#2a2a2a" stroke-width="3" stroke-dasharray="1 1.5"/><rect x="1883" y="255" width="165" height="40" fill="#535353"/><rect x="1883" y="295" width="165" height="1" fill="#3a3a3a"/><path d="M1954 260.5H1974" stroke="#2a2a2a" stroke-width="3" stroke-dasharray="1 1.5"/><rect x="1883" y="296" width="165" height="40" fill="#535353"/><rect x="1883" y="336" width="165" height="1" fill="#3a3a3a"/><path d="M1954 301.5H1974" stroke="#2a2a2a" stroke-width="3" stroke-dasharray="1 1.5"/><rect x="1883" y="337" width="165" height="40" fill="#535353"/><rect x="1883" y="377" width="165" height="1" fill="#3a3a3a"/><path d="M1954 342.5H1974" stroke="#2a2a2a" stroke-width="3" stroke-dasharray="1 1.5"/><path d="M1894 149.5H1911M1894 154H1911" stroke="#c8c8c8" stroke-width="1.4"/><rect x="1894" y="158.2" width="17" height="2.8" fill="#c8c8c8"/><text x="1895" y="202" font-family="Liberation Serif" font-style="italic" font-size="16" fill="#c8c8c8">fx</text><rect x="1894.5" y="238.5" width="4.5" height="4.5" fill="none" stroke="#c8c8c8" stroke-width="1"/><rect x="1897.5" y="241.5" width="4.5" height="4.5" fill="#535353" stroke="#c8c8c8" stroke-width="1"/><path d="M1906 232V242M1909 232V242M1904 232H1910M1906 232Q1902.5 232 1902.5 235Q1902.5 238 1906 238" fill="#c8c8c8" stroke="#c8c8c8" stroke-width="1"/><rect x="1893.5" y="274.5" width="10" height="7" rx="3.5" fill="none" stroke="#c8c8c8" stroke-width="1.5"/><rect x="1901" y="274.5" width="10" height="7" rx="3.5" fill="none" stroke="#c8c8c8" stroke-width="1.5"/><path d="M1902.5 311L1910.5 315.5L1902.5 320L1894.5 315.5Z" fill="#c8c8c8"/><path d="M1894.5 319L1902.5 323.5L1910.5 319L1910.5 321L1902.5 325.5L1894.5 321Z" fill="#c8c8c8"/><rect x="1894" y="354" width="17" height="13" fill="#c8c8c8"/><path d="M1894 360.5H1911M1899.5 354V367M1905.5 354V367" stroke="#535353" stroke-width="1"/><rect x="1883" y="378" width="165" height="702" fill="#535353"/></svg>
<div class="t" style="left:1920.00px;top:150.17px;font-family:'Liberation Sans',sans-serif;font-size:12.2px;color:#ececec;font-weight:bold;transform:scaleX(0.9744);transform-origin:left top;">Stroke</div>
<div class="t" style="left:1920.00px;top:191.17px;font-family:'Liberation Sans',sans-serif;font-size:12.2px;color:#ececec;font-weight:bold;transform:scaleX(0.9340);transform-origin:left top;">Effects</div>
<div class="t" style="left:1920.00px;top:232.17px;font-family:'Liberation Sans',sans-serif;font-size:12.2px;color:#ececec;font-weight:bold;transform:scaleX(0.9480);transform-origin:left top;">Paragraph Styles</div>
<div class="t" style="left:1920.00px;top:273.17px;font-family:'Liberation Sans',sans-serif;font-size:12.2px;color:#ececec;font-weight:bold;transform:scaleX(0.9572);transform-origin:left top;">Links</div>
<div class="t" style="left:1920.00px;top:314.17px;font-family:'Liberation Sans',sans-serif;font-size:12.2px;color:#ececec;font-weight:bold;transform:scaleX(0.9278);transform-origin:left top;">Layers</div>
<div class="t" style="left:1920.00px;top:355.17px;font-family:'Liberation Sans',sans-serif;font-size:12.2px;color:#ececec;font-weight:bold;transform:scaleX(0.9239);transform-origin:left top;">Swatches</div>
<div style="left:1436px;top:178px;width:197px;height:595px;background:#2b2b2b;border-radius:5px;box-shadow:0 1px 4px rgba(0,0,0,.25)"></div>
<div style="left:1437px;top:179px;width:195px;height:14px;background:#414141;border-radius:4px 4px 0 0"></div>
<div style="left:1437px;top:192px;width:195px;height:1px;background:#343434"></div>
<div style="left:1437px;top:193px;width:195px;height:27px;background:#424242"></div>
<div style="left:1437px;top:193px;width:63px;height:27px;background:#535353"></div>
<div style="left:1437px;top:220px;width:195px;height:552px;background:#535353;border-radius:0 0 4px 4px"></div>
<svg style="left:0;top:0" width="2048" height="1080" font-family="Liberation Sans"><path d="M1443 184L1449 190M1449 184L1443 190" stroke="#bdbdbd" stroke-width="1.2"/><path d="M1620.5 184.5L1618 186.8L1620.5 189.1M1624.5 184.5L1622 186.8L1624.5 189.1" fill="none" stroke="#b0b0b0" stroke-width="1"/><path d="M1445.8 206L1448.5 203.5L1451.2 206M1445.8 209.5L1448.5 212L1451.2 209.5" fill="none" stroke="#c0c0c0" stroke-width="1"/><path d="M1615 203H1625M1615 205.5H1625M1615 208H1625M1615 210.5H1625" stroke="#c0c0c0" stroke-width="1"/><rect x="1592" y="225" width="17.5" height="22.5" fill="#fff"/><rect x="1573.7" y="253.7" width="17.5" height="22.6" fill="#fff"/><rect x="1592.2" y="253.7" width="17.5" height="22.6" fill="#fff"/><rect x="1591.2" y="253.7" width="1" height="22.6" fill="#cfcfcf"/><rect x="1437" y="282" width="195" height="2.5" fill="#474747"/><rect x="1618.5" y="286" width="12" height="454" fill="#4d4d4d"/><rect x="1619" y="287" width="11" height="447" rx="5.5" fill="#676767"/><rect x="1528.3" y="293.9" width="28.7" height="36" fill="#6a6a6a"/><rect x="1528.8" y="294.4" width="27.7" height="35" fill="#f6f3ec"/><path d="M1528.8 294.4L1556.5 329.4M1556.5 294.4L1528.8 329.4" stroke="#e6dfcf" stroke-width="0.6"/><rect x="1536.8" y="313.4" width="11" height="2" fill="#4a4c70"/><rect x="1531.8" y="316.4" width="22" height="4" fill="#7fa3cb"/><rect x="1531.8" y="322.4" width="22" height="1.2" fill="#4a4c70"/><rect x="1548.5" y="294.4" width="8" height="9" fill="#fff"/><text x="1548.8" y="302.7" font-size="10" fill="#000" font-family="Liberation Sans">A</text><rect x="1527.8" y="287.9" width="1.2" height="47.5" fill="#d8d8d8"/><rect x="1500.0" y="357.6" width="28.7" height="36" fill="#6a6a6a"/><rect x="1500.5" y="358.1" width="27.7" height="35" fill="#b9c9dd"/><path d="M1500.5 358.1L1528.2 393.1M1528.2 358.1L1500.5 393.1" stroke="#9fb4cf" stroke-width="0.6"/><rect x="1500.5" y="358.1" width="8" height="9" fill="#fff"/><text x="1500.8" y="366.40000000000003" font-size="10" fill="#000" font-family="Liberation Sans">A</text><rect x="1528.3" y="357.6" width="28.7" height="36" fill="#6a6a6a"/><rect x="1528.8" y="358.1" width="27.7" height="35" fill="#b9c9dd"/><path d="M1528.8 358.1L1556.5 393.1M1556.5 358.1L1528.8 393.1" stroke="#9fb4cf" stroke-width="0.6"/><rect x="1543.8" y="361.1" width="4" height="6" fill="#4a4c70"/><rect x="1530.8" y="381.1" width="16" height="2" fill="#4a4c70"/><rect x="1530.8" y="383.6" width="19" height="1.5" fill="#4a4c70"/><rect x="1530.8" y="385.1" width="22" height="2" fill="#b99a5f"/><rect x="1548.5" y="358.1" width="8" height="9" fill="#fff"/><text x="1548.8" y="366.40000000000003" font-size="10" fill="#000" font-family="Liberation Sans">A</text><rect x="1525.5" y="358.1" width="5" height="35" fill="#ffffff" fill-opacity="0.85"/><rect x="1527.8" y="351.6" width="1.2" height="47.5" fill="#d8d8d8"/><rect x="1500.0" y="421.7" width="28.7" height="36" fill="#6a6a6a"/><rect x="1500.5" y="422.2" width="27.7" height="35" fill="#e9eef5"/><rect x="1501.0" y="422.7" width="8.1" height="10.5" fill="#a9bdd6"/><path d="M1501.0 422.7L1509.1 433.2M1509.1 422.7L1501.0 433.2" stroke="#8aa6c8" stroke-width="0.5"/><rect x="1501.0" y="434.0" width="8.1" height="10.5" fill="#a9bdd6"/><path d="M1501.0 434.0L1509.1 444.6M1509.1 434.0L1501.0 444.6" stroke="#8aa6c8" stroke-width="0.5"/><rect x="1501.0" y="445.4" width="8.1" height="10.5" fill="#a9bdd6"/><path d="M1501.0 445.4L1509.1 455.9M1509.1 445.4L1501.0 455.9" stroke="#8aa6c8" stroke-width="0.5"/><rect x="1509.9" y="422.7" width="8.1" height="10.5" fill="#a9bdd6"/><path d="M1509.9 422.7L1518.0 433.2M1518.0 422.7L1509.9 433.2" stroke="#8aa6c8" stroke-width="0.5"/><rect x="1509.9" y="434.0" width="8.1" height="10.5" fill="#a9bdd6"/><path d="M1509.9 434.0L1518.0 444.6M1518.0 434.0L1509.9 444.6" stroke="#8aa6c8" stroke-width="0.5"/><rect x="1509.9" y="445.4" width="8.1" height="10.5" fill="#a9bdd6"/><path d="M1509.9 445.4L1518.0 455.9M1518.0 445.4L1509.9 455.9" stroke="#8aa6c8" stroke-width="0.5"/><rect x="1518.8" y="422.7" width="8.1" height="10.5" fill="#a9bdd6"/><path d="M1518.8 422.7L1526.9 433.2M1526.9 422.7L1518.8 433.2" stroke="#8aa6c8" stroke-width="0.5"/><rect x="1518.8" y="434.0" width="8.1" height="10.5" fill="#a9bdd6"/><path d="M1518.8 434.0L1526.9 444.6M1526.9 434.0L1518.8 444.6" stroke="#8aa6c8" stroke-width="0.5"/><rect x="1518.8" y="445.4" width="8.1" height="10.5" fill="#a9bdd6"/><path d="M1518.8 445.4L1526.9 455.9M1526.9 445.4L1518.8 455.9" stroke="#8aa6c8" stroke-width="0.5"/><rect x="1500.5" y="422.2" width="8" height="9" fill="#fff"/><text x="1500.8" y="430.5" font-size="10" fill="#000" font-family="Liberation Sans">A</text><rect x="1528.3" y="421.7" width="28.7" height="36" fill="#6a6a6a"/><rect x="1528.8" y="422.2" width="27.7" height="35" fill="#f6f3ec"/><path d="M1528.8 422.2L1556.5 439.7M1556.5 422.2L1528.8 439.7" stroke="#e0d8c5" stroke-width="0.6"/><rect x="1539.8" y="431.2" width="12" height="2" fill="#4a4c70"/><rect x="1541.8" y="433.2" width="10" height="2" fill="#b99a5f"/><rect x="1528.8" y="439.2" width="27.7" height="18" fill="#b99a5f"/><rect x="1531.8" y="441.2" width="21.7" height="1.6" fill="#f0e6d0"/><rect x="1531.8" y="444.4" width="21.7" height="1.6" fill="#f0e6d0"/><rect x="1531.8" y="447.6" width="21.7" height="1.6" fill="#f0e6d0"/><rect x="1531.8" y="450.8" width="21.7" height="1.6" fill="#f0e6d0"/><rect x="1531.8" y="454.0" width="21.7" height="1.6" fill="#f0e6d0"/><rect x="1548.5" y="422.2" width="8" height="9" fill="#fff"/><text x="1548.8" y="430.5" font-size="10" fill="#000" font-family="Liberation Sans">A</text><rect x="1525.5" y="422.2" width="5" height="35" fill="#ffffff" fill-opacity="0.85"/><rect x="1527.8" y="415.7" width="1.2" height="47.5" fill="#d8d8d8"/><rect x="1500.0" y="486.1" width="28.7" height="36" fill="#6a6a6a"/><rect x="1500.5" y="486.6" width="27.7" height="35" fill="#f6f3ec"/><path d="M1500.5 486.6L1528.2 521.6M1528.2 486.6L1500.5 521.6" stroke="#e3dccb" stroke-width="0.6"/><rect x="1503.5" y="510.6" width="6" height="4" fill="#4a4c70"/><rect x="1500.5" y="486.6" width="8" height="9" fill="#fff"/><text x="1500.8" y="494.90000000000003" font-size="10" fill="#000" font-family="Liberation Sans">A</text><rect x="1528.3" y="486.1" width="28.7" height="36" fill="#6a6a6a"/><rect x="1528.8" y="486.6" width="27.7" height="35" fill="#eef1f6"/><rect x="1530.8" y="488.6" width="10.8" height="14.9" fill="#a9bdd6"/><path d="M1530.8 488.6L1541.6 503.5M1541.6 488.6L1530.8 503.5" stroke="#8aa6c8" stroke-width="0.5"/><rect x="1530.8" y="504.1" width="10.8" height="14.9" fill="#a9bdd6"/><path d="M1530.8 504.1L1541.6 519.0M1541.6 504.1L1530.8 519.0" stroke="#8aa6c8" stroke-width="0.5"/><rect x="1542.6" y="488.6" width="10.8" height="14.9" fill="#a9bdd6"/><path d="M1542.6 488.6L1553.5 503.5M1553.5 488.6L1542.6 503.5" stroke="#8aa6c8" stroke-width="0.5"/><rect x="1542.6" y="504.1" width="10.8" height="14.9" fill="#a9bdd6"/><path d="M1542.6 504.1L1553.5 519.0M1553.5 504.1L1542.6 519.0" stroke="#8aa6c8" stroke-width="0.5"/><rect x="1548.5" y="486.6" width="8" height="9" fill="#fff"/><text x="1548.8" y="494.90000000000003" font-size="10" fill="#000" font-family="Liberation Sans">A</text><rect x="1525.5" y="486.6" width="5" height="35" fill="#ffffff" fill-opacity="0.85"/><rect x="1527.8" y="480.1" width="1.2" height="47.5" fill="#d8d8d8"/><rect x="1500.0" y="550.3" width="28.7" height="36" fill="#6a6a6a"/><rect x="1500.5" y="550.8" width="27.7" height="35" fill="#7fb0ea"/><rect x="1502.0" y="556.8" width="18" height="1.5" fill="#2f5fa8"/><rect x="1502.0" y="559.9" width="14" height="1.5" fill="#2f5fa8"/><rect x="1502.0" y="563.0" width="14" height="1.5" fill="#2f5fa8"/><rect x="1502.0" y="566.1" width="18" height="1.5" fill="#2f5fa8"/><rect x="1502.0" y="569.2" width="14" height="1.5" fill="#2f5fa8"/><rect x="1502.0" y="572.3" width="14" height="1.5" fill="#2f5fa8"/><rect x="1502.0" y="575.4" width="18" height="1.5" fill="#2f5fa8"/><rect x="1502.0" y="578.5" width="14" height="1.5" fill="#2f5fa8"/><rect x="1502.0" y="581.6" width="14" height="1.5" fill="#2f5fa8"/><rect x="1515.0" y="554.3" width="11" height="29" fill="none" stroke="#2f6fc8" stroke-width="0.8"/><path d="M1515.0 554.3L1526.0 583.3M1526.0 554.3L1515.0 583.3M1515.0 563.8H1526.0M1515.0 573.8H1526.0" stroke="#2f6fc8" stroke-width="0.6"/><rect x="1500.5" y="550.8" width="27.7" height="35" fill="#3b8cf0" fill-opacity="0.25"/><rect x="1500.5" y="550.8" width="8" height="9" fill="#fff"/><text x="1500.8" y="559.0999999999999" font-size="10" fill="#000" font-family="Liberation Sans">A</text><rect x="1528.3" y="550.3" width="28.7" height="36" fill="#6a6a6a"/><rect x="1528.8" y="550.8" width="27.7" height="35" fill="#f3f3f3"/><rect x="1531.8" y="554.8" width="10" height="10" fill="#a9bdd6"/><path d="M1531.8 554.8L1541.8 564.8M1541.8 554.8L1531.8 564.8" stroke="#8aa6c8" stroke-width="0.5"/><rect x="1542.8" y="554.8" width="11" height="10" fill="#a9bdd6"/><path d="M1542.8 554.8L1553.8 564.8M1553.8 554.8L1542.8 564.8" stroke="#8aa6c8" stroke-width="0.5"/><rect x="1531.8" y="565.8" width="6" height="10" fill="#a9bdd6"/><path d="M1531.8 565.8L1537.8 575.8M1537.8 565.8L1531.8 575.8" stroke="#8aa6c8" stroke-width="0.5"/><rect x="1538.8" y="565.8" width="15" height="10" fill="#a9bdd6"/><path d="M1538.8 565.8L1553.8 575.8M1553.8 565.8L1538.8 575.8" stroke="#8aa6c8" stroke-width="0.5"/><rect x="1531.8" y="576.8" width="6" height="7" fill="#a9bdd6"/><path d="M1531.8 576.8L1537.8 583.8M1537.8 576.8L1531.8 583.8" stroke="#8aa6c8" stroke-width="0.5"/><rect x="1538.8" y="576.8" width="6" height="7" fill="#a9bdd6"/><path d="M1538.8 576.8L1544.8 583.8M1544.8 576.8L1538.8 583.8" stroke="#8aa6c8" stroke-width="0.5"/><rect x="1545.8" y="576.8" width="8" height="7" fill="#a9bdd6"/><path d="M1545.8 576.8L1553.8 583.8M1553.8 576.8L1545.8 583.8" stroke="#8aa6c8" stroke-width="0.5"/><rect x="1548.5" y="550.8" width="8" height="9" fill="#fff"/><text x="1548.8" y="559.0999999999999" font-size="10" fill="#000" font-family="Liberation Sans">A</text><rect x="1525.5" y="550.8" width="5" height="35" fill="#ffffff" fill-opacity="0.85"/><rect x="1527.8" y="544.3" width="1.2" height="47.5" fill="#d8d8d8"/><rect x="1500.0" y="614.1" width="28.7" height="36" fill="#6a6a6a"/><rect x="1500.5" y="614.6" width="27.7" height="35" fill="#eef1f6"/><rect x="1501.5" y="615.6" width="26" height="15" fill="#a9bdd6"/><path d="M1501.5 615.6L1527.5 630.6M1527.5 615.6L1501.5 630.6" stroke="#8aa6c8" stroke-width="0.5"/><rect x="1501.5" y="631.6" width="11" height="17" fill="#a9bdd6"/><path d="M1501.5 631.6L1512.5 648.6M1512.5 631.6L1501.5 648.6" stroke="#8aa6c8" stroke-width="0.5"/><rect x="1513.5" y="631.6" width="14" height="17" fill="#a9bdd6"/><path d="M1513.5 631.6L1527.5 648.6M1527.5 631.6L1513.5 648.6" stroke="#8aa6c8" stroke-width="0.5"/><rect x="1500.5" y="614.6" width="8" height="9" fill="#fff"/><text x="1500.8" y="622.9" font-size="10" fill="#000" font-family="Liberation Sans">A</text><rect x="1528.3" y="614.1" width="28.7" height="36" fill="#6a6a6a"/><rect x="1528.8" y="614.6" width="27.7" height="35" fill="#f3f3f3"/><rect x="1528.8" y="615.6" width="12" height="11" fill="#a9bdd6"/><path d="M1528.8 615.6L1540.8 626.6M1540.8 615.6L1528.8 626.6" stroke="#8aa6c8" stroke-width="0.5"/><rect x="1528.8" y="627.6" width="12" height="11" fill="#a9bdd6"/><path d="M1528.8 627.6L1540.8 638.6M1540.8 627.6L1528.8 638.6" stroke="#8aa6c8" stroke-width="0.5"/><rect x="1528.8" y="639.6" width="12" height="9" fill="#a9bdd6"/><path d="M1528.8 639.6L1540.8 648.6M1540.8 639.6L1528.8 648.6" stroke="#8aa6c8" stroke-width="0.5"/><rect x="1542.8" y="618.6" width="8" height="2" fill="#4a4c70"/><rect x="1542.8" y="622.6" width="10" height="2" fill="#4a4c70"/><rect x="1542.8" y="625.6" width="6" height="2" fill="#b99a5f"/><rect x="1542.8" y="628.6" width="11" height="2" fill="#4a4c70"/><rect x="1542.8" y="632.6" width="9" height="2" fill="#4a4c70"/><rect x="1542.8" y="635.6" width="12" height="2" fill="#4a4c70"/><rect x="1542.8" y="638.6" width="10" height="2" fill="#4a4c70"/><rect x="1542.8" y="642.6" width="8" height="2" fill="#4a4c70"/><rect x="1548.5" y="614.6" width="8" height="9" fill="#fff"/><text x="1548.8" y="622.9" font-size="10" fill="#000" font-family="Liberation Sans">A</text><rect x="1525.5" y="614.6" width="5" height="35" fill="#ffffff" fill-opacity="0.85"/><rect x="1527.8" y="608.1" width="1.2" height="47.5" fill="#d8d8d8"/><rect x="1500.0" y="677.9" width="28.7" height="36" fill="#6a6a6a"/><rect x="1500.5" y="678.4" width="27.7" height="35" fill="#f3f3f3"/><rect x="1502.5" y="681.4" width="9" height="11" fill="#a9bdd6"/><path d="M1502.5 692.4L1511.5 681.4" stroke="#8aa6c8" stroke-width="0.6"/><rect x="1515.5" y="684.4" width="9" height="2" fill="#4a4c70"/><rect x="1515.5" y="687.4" width="8" height="2" fill="#4a4c70"/><rect x="1515.5" y="690.4" width="9" height="1.5" fill="#b99a5f"/><rect x="1501.5" y="697.4" width="25.7" height="8" fill="#b99a5f"/><rect x="1503.5" y="699.4" width="8" height="1.5" fill="#4a4c70"/><rect x="1503.5" y="702.4" width="10" height="1" fill="#fff"/><rect x="1512.5" y="708.4" width="4" height="2" fill="#b99a5f"/><rect x="1500.5" y="678.4" width="8" height="9" fill="#fff"/><text x="1500.8" y="686.6999999999999" font-size="10" fill="#000" font-family="Liberation Sans">A</text><rect x="1527.8" y="671.9" width="1.2" height="47.5" fill="#d8d8d8"/><path d="M1537 288H1547L1542 293Z" fill="#bdbdbd"/><rect x="1514" y="591" width="25.4" height="14" fill="#2f86e8"/><rect x="1437" y="739.5" width="195" height="1" fill="#474747"/><path d="M1538.5 749.5H1544.5V757H1538.5Z" fill="none" stroke="#c0c0c0" stroke-width="1"/><path d="M1541.5 749.5L1544.5 746.5H1550.5V753.5H1544.5" fill="none" stroke="#c0c0c0" stroke-width="1"/><path d="M1553 756L1555 756L1554 757.5Z" fill="#c0c0c0"/><rect x="1569.5" y="746.5" width="10" height="10" fill="none" stroke="#c0c0c0" stroke-width="1"/><path d="M1574.5 748.5V754.5M1571.5 751.5H1577.5" stroke="#c0c0c0" stroke-width="1"/><path d="M1596 748.5H1607M1599.5 748.5V746.5H1603.5V748.5M1597.5 749.5L1598.5 757.5H1604.5L1605.5 749.5M1600 750.5V756M1603 750.5V756" fill="none" stroke="#c0c0c0" stroke-width="1"/><rect x="1437" y="763.5" width="195" height="1.5" fill="#2e2e2e"/><rect x="1437" y="765" width="195" height="7" fill="#474747"/><path d="M1523 768.5H1546" stroke="#2e2e2e" stroke-width="3" stroke-dasharray="1 1"/></svg>
<div class="t" style="left:1456.40px;top:200.94px;font-family:'Liberation Sans',sans-serif;font-size:12px;color:#f0f0f0;font-weight:bold;transform:scaleX(0.9051);transform-origin:left top;">Pages</div>
<div class="t" style="left:1441.30px;top:227.51px;font-family:'Liberation Sans',sans-serif;font-size:11.8px;color:#eaeaea;transform:scaleX(0.8917);transform-origin:left top;">[None]</div>
<div class="t" style="left:1441.30px;top:256.21px;font-family:'Liberation Sans',sans-serif;font-size:11.8px;color:#eaeaea;transform:scaleX(0.8911);transform-origin:left top;">A–Master</div>
<div class="t" style="left:1537.52px;top:336.02px;font-family:'Liberation Sans',sans-serif;font-size:12.5px;color:#f2f2f2;transform:scaleX(0.7911);transform-origin:center top;">1</div>
<div class="t" style="left:1517.97px;top:399.72px;font-family:'Liberation Sans',sans-serif;font-size:12.5px;color:#f2f2f2;transform:scaleX(0.9409);transform-origin:center top;">2-3</div>
<div class="t" style="left:1517.97px;top:463.82px;font-family:'Liberation Sans',sans-serif;font-size:12.5px;color:#f2f2f2;transform:scaleX(0.9409);transform-origin:center top;">4-5</div>
<div class="t" style="left:1517.97px;top:528.22px;font-family:'Liberation Sans',sans-serif;font-size:12.5px;color:#f2f2f2;transform:scaleX(0.9409);transform-origin:center top;">6-7</div>
<div class="t" style="left:1517.97px;top:592.42px;font-family:'Liberation Sans',sans-serif;font-size:12.5px;color:#f2f2f2;font-weight:bold;transform:scaleX(0.9409);transform-origin:center top;">8-9</div>
<div class="t" style="left:1511.48px;top:656.22px;font-family:'Liberation Sans',sans-serif;font-size:12.5px;color:#f2f2f2;transform:scaleX(0.9342);transform-origin:center top;">10-11</div>
<div class="t" style="left:1506.45px;top:720.02px;font-family:'Liberation Sans',sans-serif;font-size:12.5px;color:#f2f2f2;transform:scaleX(0.9350);transform-origin:center top;">12</div>
<div class="t" style="left:1443.50px;top:747.46px;font-family:'Liberation Sans',sans-serif;font-size:11.5px;color:#e6e6e6;transform:scaleX(0.9121);transform-origin:left top;">12 Pages in 7 S...</div>
<div style="left:1671px;top:446px;width:243px;height:249px;background:#2b2b2b;border-radius:5px;box-shadow:0 1px 4px rgba(0,0,0,.25)"></div>
<div style="left:1672px;top:447px;width:241px;height:13px;background:#414141;border-radius:4px 4px 0 0"></div>
<div style="left:1672px;top:459px;width:241px;height:1px;background:#343434"></div>
<div style="left:1672px;top:460px;width:241px;height:27px;background:#424242"></div>
<div style="left:1672px;top:460px;width:85.5px;height:27px;background:#535353"></div>
<div style="left:1672px;top:487px;width:241px;height:207px;background:#535353;border-radius:0 0 4px 4px"></div>
<svg style="left:0;top:0" width="2048" height="1080" font-family="Liberation Sans"><path d="M1678 451L1684 457M1684 451L1678 457" stroke="#bdbdbd" stroke-width="1.2"/><path d="M1900.5 451.5L1898 453.8L1900.5 456.1M1904.5 451.5L1902 453.8L1904.5 456.1" fill="none" stroke="#b0b0b0" stroke-width="1"/><path d="M1680.5 472.5L1683 470L1685.5 472.5M1680.5 476L1683 478.5L1685.5 476" fill="none" stroke="#c0c0c0" stroke-width="1"/><path d="M1897 470.5H1907M1897 473H1907M1897 475.5H1907M1897 478H1907" stroke="#c0c0c0" stroke-width="1"/><rect x="1678.5" y="493.5" width="229" height="19.5" rx="2.5" fill="#454545" stroke="#6a6a6a" stroke-width="1"/><path d="M1889.5 493V513.5" stroke="#6a6a6a"/><path d="M1895.5 501.25L1899 504.75L1902.5 501.25" fill="none" stroke="#d0d0d0" stroke-width="1.2"/><circle cx="1684.5" cy="502" r="3.6" fill="none" stroke="#c8c8c8" stroke-width="1.1"/><path d="M1687 504.5L1690 507.5" stroke="#c8c8c8" stroke-width="1.3"/><path d="M1692 502L1694 504L1696 502" fill="none" stroke="#c8c8c8" stroke-width="1"/><rect x="1678.5" y="519.5" width="229" height="19.5" rx="2.5" fill="#454545" stroke="#6a6a6a" stroke-width="1"/><path d="M1889.5 519V539.5" stroke="#6a6a6a"/><path d="M1895.5 527.25L1899 530.75L1902.5 527.25" fill="none" stroke="#d0d0d0" stroke-width="1.2"/><path d="M1678 545.5H1908M1678 603.5H1908M1678 661.5H1908" stroke="#4a4a4a" stroke-width="1"/><rect x="1701.0" y="552.0" width="85.0" height="19.5" rx="2.5" fill="#454545" stroke="#6a6a6a" stroke-width="1"/><rect x="1701.5" y="552.5" width="16" height="18.5" fill="#474747"/><path d="M1718.0 551.5V572" stroke="#6a6a6a"/><path d="M1705.5 558.75L1709.0 555.25L1712.5 558.75M1705.5 564.75L1709.0 568.25L1712.5 564.75" fill="none" stroke="#c8c8c8" stroke-width="1"/><path d="M1768.0 551.5V572" stroke="#6a6a6a"/><path d="M1774.0 559.75L1777.5 563.25L1781.0 559.75" fill="none" stroke="#d0d0d0" stroke-width="1.2"/><rect x="1822.0" y="552.0" width="85.5" height="19.5" rx="2.5" fill="#454545" stroke="#6a6a6a" stroke-width="1"/><rect x="1822.5" y="552.5" width="16" height="18.5" fill="#474747"/><path d="M1839.0 551.5V572" stroke="#6a6a6a"/><path d="M1826.5 558.75L1830.0 555.25L1833.5 558.75M1826.5 564.75L1830.0 568.25L1833.5 564.75" fill="none" stroke="#c8c8c8" stroke-width="1"/><path d="M1889.5 551.5V572" stroke="#6a6a6a"/><path d="M1895.5 559.75L1899 563.25L1902.5 559.75" fill="none" stroke="#d0d0d0" stroke-width="1.2"/><rect x="1701.0" y="577.5" width="85.0" height="19.5" rx="2.5" fill="#454545" stroke="#6a6a6a" stroke-width="1"/><rect x="1701.5" y="578" width="16" height="18.5" fill="#5a5a5a"/><path d="M1718.0 577V597.5" stroke="#6a6a6a"/><path d="M1705.5 584.25L1709.0 580.75L1712.5 584.25M1705.5 590.25L1709.0 593.75L1712.5 590.25" fill="none" stroke="#7a7a7a" stroke-width="1"/><path d="M1768.0 577V597.5" stroke="#6a6a6a"/><path d="M1774.0 585.25L1777.5 588.75L1781.0 585.25" fill="none" stroke="#d0d0d0" stroke-width="1.2"/><rect x="1822.0" y="577.5" width="85.5" height="19.5" rx="2.5" fill="#454545" stroke="#6a6a6a" stroke-width="1"/><rect x="1822.5" y="578" width="16" height="18.5" fill="#474747"/><path d="M1839.0 577V597.5" stroke="#6a6a6a"/><path d="M1826.5 584.25L1830.0 580.75L1833.5 584.25M1826.5 590.25L1830.0 593.75L1833.5 590.25" fill="none" stroke="#c8c8c8" stroke-width="1"/><path d="M1889.5 577V597.5" stroke="#6a6a6a"/><path d="M1895.5 585.25L1899 588.75L1902.5 585.25" fill="none" stroke="#d0d0d0" stroke-width="1.2"/><rect x="1701.0" y="609.5" width="85.0" height="19.5" rx="2.5" fill="#454545" stroke="#6a6a6a" stroke-width="1"/><rect x="1701.5" y="610" width="16" height="18.5" fill="#474747"/><path d="M1718.0 609V629.5" stroke="#6a6a6a"/><path d="M1705.5 616.25L1709.0 612.75L1712.5 616.25M1705.5 622.25L1709.0 625.75L1712.5 622.25" fill="none" stroke="#c8c8c8" stroke-width="1"/><path d="M1768.0 609V629.5" stroke="#6a6a6a"/><path d="M1774.0 617.25L1777.5 620.75L1781.0 617.25" fill="none" stroke="#d0d0d0" stroke-width="1.2"/><rect x="1822.0" y="609.5" width="85.5" height="19.5" rx="2.5" fill="#454545" stroke="#6a6a6a" stroke-width="1"/><rect x="1822.5" y="610" width="16" height="18.5" fill="#474747"/><path d="M1839.0 609V629.5" stroke="#6a6a6a"/><path d="M1826.5 616.25L1830.0 612.75L1833.5 616.25M1826.5 622.25L1830.0 625.75L1833.5 622.25" fill="none" stroke="#c8c8c8" stroke-width="1"/><path d="M1889.5 609V629.5" stroke="#6a6a6a"/><path d="M1895.5 617.25L1899 620.75L1902.5 617.25" fill="none" stroke="#d0d0d0" stroke-width="1.2"/><rect x="1701.0" y="636.0" width="85.0" height="19.0" rx="2.5" fill="#454545" stroke="#6a6a6a" stroke-width="1"/><rect x="1701.5" y="636.5" width="16" height="18.0" fill="#474747"/><path d="M1718.0 635.5V655.5" stroke="#6a6a6a"/><path d="M1705.5 642.5L1709.0 639.0L1712.5 642.5M1705.5 648.5L1709.0 652.0L1712.5 648.5" fill="none" stroke="#c8c8c8" stroke-width="1"/><rect x="1822.0" y="636.0" width="85.5" height="19.0" rx="2.5" fill="#454545" stroke="#6a6a6a" stroke-width="1"/><rect x="1822.5" y="636.5" width="16" height="18.0" fill="#474747"/><path d="M1839.0 635.5V655.5" stroke="#6a6a6a"/><path d="M1826.5 642.5L1830.0 639.0L1833.5 642.5M1826.5 648.5L1830.0 652.0L1833.5 648.5" fill="none" stroke="#c8c8c8" stroke-width="1"/><rect x="1758.5" y="667.5" width="127" height="19.5" rx="2.5" fill="#454545" stroke="#6a6a6a" stroke-width="1"/><path d="M1873.5 675.25L1877 678.75L1880.5 675.25" fill="none" stroke="#d0d0d0" stroke-width="1.2"/><text x="1678" y="571" font-family="Liberation Serif" font-weight="bold" font-size="11" fill="#c8c8c8">T</text><text x="1684" y="570" font-family="Liberation Serif" font-weight="bold" font-size="17" fill="#c8c8c8">T</text><text x="1805" y="559" font-family="Liberation Sans" font-size="8" fill="#c8c8c8">A</text><text x="1805" y="570" font-family="Liberation Sans" font-size="8" fill="#c8c8c8">A</text><path d="M1804 559.5H1817M1804 570.5H1817M1801 560V570M1799.5 562L1801 560L1802.5 562M1799.5 568L1801 570L1802.5 568" fill="none" stroke="#c8c8c8" stroke-width="0.9"/><text x="1677" y="594" font-family="Liberation Sans" font-size="12" fill="#c8c8c8" letter-spacing="-2">V/A</text><path d="M1686 597H1694M1686 597L1688.5 595M1686 597L1688.5 599" stroke="#c8c8c8" stroke-width="0.9" fill="none"/><rect x="1799" y="579" width="18" height="10" fill="#c8c8c8"/><text x="1799.5" y="588.5" font-family="Liberation Sans" font-weight="bold" font-size="11" fill="#535353" letter-spacing="-1">VA</text><path d="M1800 594H1816M1800 594L1802.5 592M1800 594L1802.5 596M1816 594L1813.5 592M1816 594L1813.5 596" stroke="#c8c8c8" stroke-width="0.9" fill="none"/><path d="M1680.5 610.5V627.5M1678.5 613L1680.5 610.5L1682.5 613M1678.5 625L1680.5 627.5L1682.5 625" stroke="#c8c8c8" stroke-width="1" fill="none"/><text x="1683" y="627" font-family="Liberation Serif" font-weight="bold" font-size="19" fill="#c8c8c8">T</text><text x="1801" y="624" font-family="Liberation Serif" font-weight="bold" font-size="18" fill="#c8c8c8">T</text><path d="M1799 627.5H1816M1799 627.5L1801.5 625.5M1799 627.5L1801.5 629.5M1816 627.5L1813.5 625.5M1816 627.5L1813.5 629.5" stroke="#c8c8c8" stroke-width="0.9" fill="none"/><text x="1678" y="651" font-family="Liberation Sans" font-size="11" fill="#c8c8c8">A</text><text x="1686" y="645" font-family="Liberation Sans" font-size="7" fill="#c8c8c8">a</text><path d="M1678 652.5H1694M1690.5 647V655M1688.5 649.5L1690.5 647L1692.5 649.5" stroke="#c8c8c8" stroke-width="0.9" fill="none"/><text x="1800" y="652" font-family="Liberation Serif" font-style="italic" font-size="19" fill="#c8c8c8">T</text></svg>
<div class="t" style="left:1691.00px;top:467.84px;font-family:'Liberation Sans',sans-serif;font-size:12px;color:#f0f0f0;font-weight:bold;transform:scaleX(0.9727);transform-origin:left top;">Character</div>
<div class="t" style="left:1702.10px;top:497.76px;font-family:'Liberation Sans',sans-serif;font-size:11.5px;color:#ececec;transform:scaleX(0.9332);transform-origin:left top;">Minion Pro</div>
<div class="t" style="left:1682.10px;top:523.76px;font-family:'Liberation Sans',sans-serif;font-size:11.5px;color:#ececec;transform:scaleX(0.9162);transform-origin:left top;">Regular</div>
<div class="t" style="left:1722.00px;top:556.46px;font-family:'Liberation Sans',sans-serif;font-size:11.5px;color:#e8e8e8;transform:scaleX(0.9774);transform-origin:left top;">12 pt</div>
<div class="t" style="left:1841.80px;top:556.46px;font-family:'Liberation Sans',sans-serif;font-size:11.5px;color:#e8e8e8;transform:scaleX(0.9713);transform-origin:left top;">(14.4 pt)</div>
<div class="t" style="left:1721.40px;top:581.96px;font-family:'Liberation Sans',sans-serif;font-size:11.5px;color:#e8e8e8;transform:scaleX(0.9175);transform-origin:left top;">Metrics</div>
<div class="t" style="left:1842.20px;top:581.96px;font-family:'Liberation Sans',sans-serif;font-size:11.5px;color:#e8e8e8;transform:scaleX(0.8756);transform-origin:left top;">0</div>
<div class="t" style="left:1721.80px;top:613.56px;font-family:'Liberation Sans',sans-serif;font-size:11.5px;color:#e8e8e8;transform:scaleX(0.8500);transform-origin:left top;">100%</div>
<div class="t" style="left:1842.00px;top:613.56px;font-family:'Liberation Sans',sans-serif;font-size:11.5px;color:#e8e8e8;transform:scaleX(0.8670);transform-origin:left top;">100%</div>
<div class="t" style="left:1722.20px;top:639.26px;font-family:'Liberation Sans',sans-serif;font-size:11.5px;color:#e8e8e8;transform:scaleX(1.0062);transform-origin:left top;">0 pt</div>
<div class="t" style="left:1842.00px;top:639.26px;font-family:'Liberation Sans',sans-serif;font-size:11.5px;color:#e8e8e8;transform:scaleX(1.0732);transform-origin:left top;">0°</div>
<div class="t" style="left:1703.30px;top:672.26px;font-family:'Liberation Sans',sans-serif;font-size:11.5px;color:#ececec;transform:scaleX(0.9087);transform-origin:left top;">Language:</div>
<div class="t" style="left:1762.30px;top:672.26px;font-family:'Liberation Sans',sans-serif;font-size:11.5px;color:#ececec;transform:scaleX(0.8885);transform-origin:left top;">English: USA</div>
<div class="t" style="left:1675.60px;top:770.42px;font-family:'Liberation Sans',sans-serif;font-size:21px;color:#ffffff;letter-spacing:4.5px;transform:scaleX(0.9369);transform-origin:left top;">INDESIGN TEMPLATE</div>
<svg style="left:1705px;top:813px" width="211" height="205" viewBox="0 0 211 205"><rect x="0" y="0" width="211" height="205" rx="36" fill="#49021f"/><rect x="57.2" y="52.3" width="20.1" height="92.6" fill="#ff3366"/><path d="M136.5 45H156.4V142.5Q141 147 122 147Q90 147 90 111Q90 72.5 122 72.5Q130 72.5 136.5 74.5ZM136.5 90.5Q131 89.5 126.5 89.5Q110.7 89.5 110.7 110Q110.7 128.5 126.5 128.5Q132 128.5 136.5 127.5Z" fill="#ff3366" fill-rule="evenodd"/></svg></body></html>
